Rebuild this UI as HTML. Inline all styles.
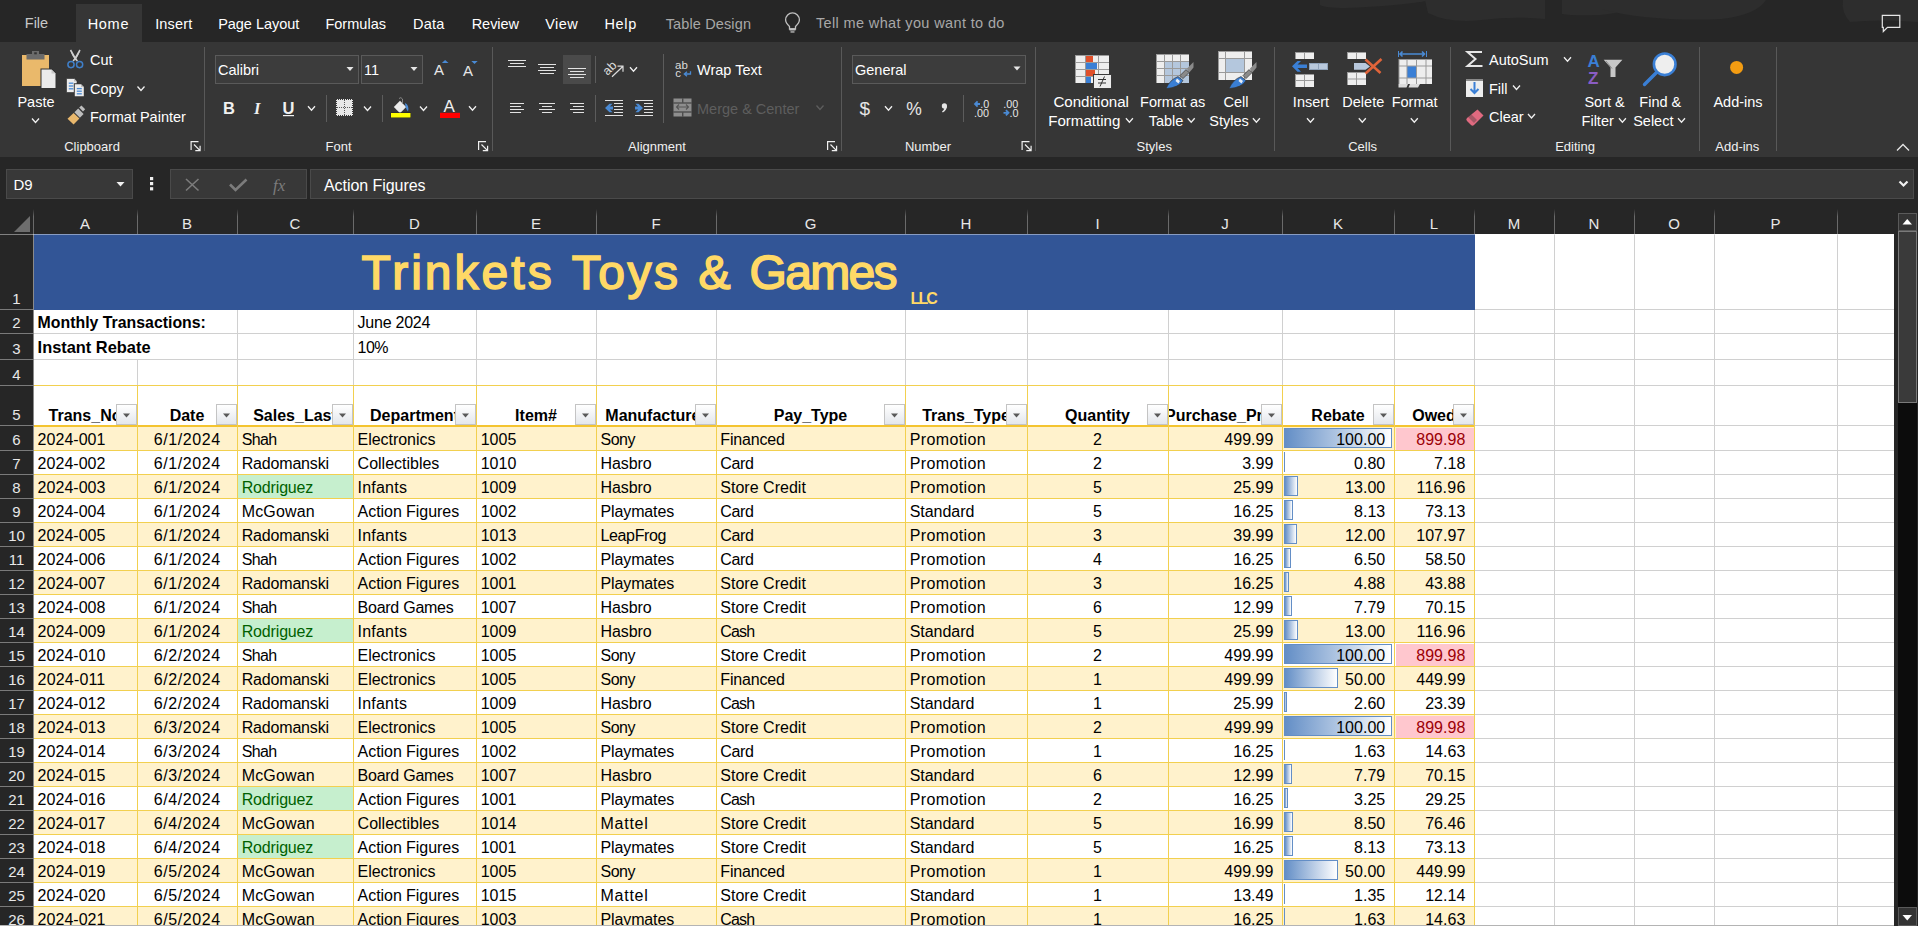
<!DOCTYPE html><html><head><meta charset="utf-8"><title>Excel</title><style>html,body{margin:0;padding:0;}body{width:1918px;height:926px;overflow:hidden;position:relative;background:#262626;font-family:'Liberation Sans', sans-serif;}</style></head><body><div style="position:absolute;left:0px;top:0px;width:1918px;height:42px;background:#262626;"></div><svg style="position:absolute;left:0;top:0" width="1918" height="42"><g fill="#2d2d2d"><path d="M1320 0 H1432 Q1400 6 1345 8 Q1325 8 1320 5 Z"/><path d="M1425 0 H1545 V19 Q1512 16 1482 20 Q1450 24 1428 13 Z"/><path d="M1562 0 H1640 Q1628 13 1600 15 Q1572 16 1562 14 Z"/><path d="M1600 0 H1766 Q1756 15 1722 19 Q1650 22 1600 9 Z"/><path d="M1843 0 H1918 V22 Q1880 19 1850 22 Q1841 12 1843 0 Z"/></g></svg><div style="position:absolute;left:76px;top:4px;width:66px;height:38px;background:#363636;"></div><div style="position:absolute;left:24.80px;top:16.00px;font:normal 14.5px/14.5px 'Liberation Sans', sans-serif;color:#c8c8c8;white-space:nowrap;letter-spacing:-0.003px;">File</div><div style="position:absolute;left:87.70px;top:17.00px;font:normal 14.5px/14.5px 'Liberation Sans', sans-serif;color:#ffffff;white-space:nowrap;letter-spacing:0.693px;">Home</div><div style="position:absolute;left:155.20px;top:17.00px;font:normal 14.5px/14.5px 'Liberation Sans', sans-serif;color:#ffffff;white-space:nowrap;letter-spacing:0.156px;">Insert</div><div style="position:absolute;left:218.20px;top:17.00px;font:normal 14.5px/14.5px 'Liberation Sans', sans-serif;color:#ffffff;white-space:nowrap;letter-spacing:-0.038px;">Page Layout</div><div style="position:absolute;left:325.40px;top:17.00px;font:normal 14.5px/14.5px 'Liberation Sans', sans-serif;color:#ffffff;white-space:nowrap;letter-spacing:0.022px;">Formulas</div><div style="position:absolute;left:413.00px;top:17.00px;font:normal 14.5px/14.5px 'Liberation Sans', sans-serif;color:#ffffff;white-space:nowrap;letter-spacing:0.268px;">Data</div><div style="position:absolute;left:471.70px;top:17.00px;font:normal 14.5px/14.5px 'Liberation Sans', sans-serif;color:#ffffff;white-space:nowrap;letter-spacing:-0.040px;">Review</div><div style="position:absolute;left:545.20px;top:17.00px;font:normal 14.5px/14.5px 'Liberation Sans', sans-serif;color:#ffffff;white-space:nowrap;letter-spacing:0.484px;">View</div><div style="position:absolute;left:604.40px;top:17.00px;font:normal 14.5px/14.5px 'Liberation Sans', sans-serif;color:#ffffff;white-space:nowrap;letter-spacing:0.670px;">Help</div><div style="position:absolute;left:665.70px;top:17.00px;font:normal 14.5px/14.5px 'Liberation Sans', sans-serif;color:#a8a8a8;white-space:nowrap;letter-spacing:0.131px;">Table Design</div><div style="position:absolute;left:815.90px;top:16.00px;font:normal 14.5px/14.5px 'Liberation Sans', sans-serif;color:#a8a8a8;white-space:nowrap;letter-spacing:0.370px;">Tell me what you want to do</div><div style="position:absolute;left:0px;top:42px;width:1918px;height:115px;background:#363636;"></div><div style="position:absolute;left:204px;top:47px;width:1px;height:104px;background:#595959;"></div><div style="position:absolute;left:492px;top:47px;width:1px;height:104px;background:#595959;"></div><div style="position:absolute;left:841px;top:47px;width:1px;height:104px;background:#595959;"></div><div style="position:absolute;left:1035px;top:47px;width:1px;height:104px;background:#595959;"></div><div style="position:absolute;left:1274px;top:47px;width:1px;height:104px;background:#595959;"></div><div style="position:absolute;left:1450px;top:47px;width:1px;height:104px;background:#595959;"></div><div style="position:absolute;left:1699px;top:47px;width:1px;height:104px;background:#595959;"></div><div style="position:absolute;left:1776px;top:47px;width:1px;height:104px;background:#595959;"></div><div style="position:absolute;left:92.05px;top:140.00px;font:normal 13px/13px 'Liberation Sans', sans-serif;color:#f0f0f0;white-space:nowrap;transform:translateX(-50%);">Clipboard</div><div style="position:absolute;left:338.50px;top:140.00px;font:normal 13px/13px 'Liberation Sans', sans-serif;color:#f0f0f0;white-space:nowrap;transform:translateX(-50%);">Font</div><div style="position:absolute;left:657.00px;top:140.00px;font:normal 13px/13px 'Liberation Sans', sans-serif;color:#f0f0f0;white-space:nowrap;transform:translateX(-50%);">Alignment</div><div style="position:absolute;left:928.05px;top:140.00px;font:normal 13px/13px 'Liberation Sans', sans-serif;color:#f0f0f0;white-space:nowrap;transform:translateX(-50%);">Number</div><div style="position:absolute;left:1154.25px;top:140.00px;font:normal 13px/13px 'Liberation Sans', sans-serif;color:#f0f0f0;white-space:nowrap;transform:translateX(-50%);">Styles</div><div style="position:absolute;left:1362.65px;top:140.00px;font:normal 13px/13px 'Liberation Sans', sans-serif;color:#f0f0f0;white-space:nowrap;transform:translateX(-50%);">Cells</div><div style="position:absolute;left:1575.05px;top:140.00px;font:normal 13px/13px 'Liberation Sans', sans-serif;color:#f0f0f0;white-space:nowrap;transform:translateX(-50%);">Editing</div><div style="position:absolute;left:1737.30px;top:140.00px;font:normal 13px/13px 'Liberation Sans', sans-serif;color:#f0f0f0;white-space:nowrap;transform:translateX(-50%);">Add-ins</div><div style="position:absolute;left:215px;top:55px;width:142px;height:27px;background:#3c3c3c;border:1px solid #5a5a5a;"></div><div style="position:absolute;left:361px;top:55px;width:60px;height:27px;background:#3c3c3c;border:1px solid #5a5a5a;"></div><div style="position:absolute;left:852px;top:55px;width:172px;height:27px;background:#3c3c3c;border:1px solid #5a5a5a;"></div><div style="position:absolute;left:36.00px;top:95.00px;font:normal 14.5px/14.5px 'Liberation Sans', sans-serif;color:#fff;white-space:nowrap;transform:translateX(-50%);">Paste</div><div style="position:absolute;left:90.00px;top:53.00px;font:normal 14.5px/14.5px 'Liberation Sans', sans-serif;color:#fff;white-space:nowrap;">Cut</div><div style="position:absolute;left:90.00px;top:82.00px;font:normal 14.5px/14.5px 'Liberation Sans', sans-serif;color:#fff;white-space:nowrap;">Copy</div><div style="position:absolute;left:90.00px;top:110.00px;font:normal 14.5px/14.5px 'Liberation Sans', sans-serif;color:#fff;white-space:nowrap;">Format Painter</div><div style="position:absolute;left:218.00px;top:63.00px;font:normal 14.5px/14.5px 'Liberation Sans', sans-serif;color:#fff;white-space:nowrap;">Calibri</div><div style="position:absolute;left:364.00px;top:63.00px;font:normal 14.5px/14.5px 'Liberation Sans', sans-serif;color:#fff;white-space:nowrap;">11</div><div style="position:absolute;left:697.00px;top:63.00px;font:normal 14.5px/14.5px 'Liberation Sans', sans-serif;color:#fff;white-space:nowrap;">Wrap Text</div><div style="position:absolute;left:697.00px;top:102.00px;font:normal 14.5px/14.5px 'Liberation Sans', sans-serif;color:#5e5e5e;white-space:nowrap;">Merge &amp; Center</div><div style="position:absolute;left:855.00px;top:63.00px;font:normal 14.5px/14.5px 'Liberation Sans', sans-serif;color:#fff;white-space:nowrap;">General</div><div style="position:absolute;left:1091.20px;top:94.00px;font:normal 15.1px/15.1px 'Liberation Sans', sans-serif;color:#fff;white-space:nowrap;transform:translateX(-50%);">Conditional</div><div style="position:absolute;left:1084.30px;top:113.00px;font:normal 15.1px/15.1px 'Liberation Sans', sans-serif;color:#fff;white-space:nowrap;transform:translateX(-50%);">Formatting</div><div style="position:absolute;left:1172.70px;top:95.00px;font:normal 14.5px/14.5px 'Liberation Sans', sans-serif;color:#fff;white-space:nowrap;transform:translateX(-50%);">Format as</div><div style="position:absolute;left:1166.00px;top:114.00px;font:normal 14.5px/14.5px 'Liberation Sans', sans-serif;color:#fff;white-space:nowrap;transform:translateX(-50%);">Table</div><div style="position:absolute;left:1236.00px;top:95.00px;font:normal 14.5px/14.5px 'Liberation Sans', sans-serif;color:#fff;white-space:nowrap;transform:translateX(-50%);">Cell</div><div style="position:absolute;left:1229.00px;top:114.00px;font:normal 14.5px/14.5px 'Liberation Sans', sans-serif;color:#fff;white-space:nowrap;transform:translateX(-50%);">Styles</div><div style="position:absolute;left:1311.00px;top:95.00px;font:normal 14.5px/14.5px 'Liberation Sans', sans-serif;color:#fff;white-space:nowrap;transform:translateX(-50%);">Insert</div><div style="position:absolute;left:1363.30px;top:95.00px;font:normal 14.5px/14.5px 'Liberation Sans', sans-serif;color:#fff;white-space:nowrap;transform:translateX(-50%);">Delete</div><div style="position:absolute;left:1414.60px;top:95.00px;font:normal 14.5px/14.5px 'Liberation Sans', sans-serif;color:#fff;white-space:nowrap;transform:translateX(-50%);">Format</div><div style="position:absolute;left:1489.00px;top:53.00px;font:normal 14.5px/14.5px 'Liberation Sans', sans-serif;color:#fff;white-space:nowrap;">AutoSum</div><div style="position:absolute;left:1489.00px;top:82.00px;font:normal 14.5px/14.5px 'Liberation Sans', sans-serif;color:#fff;white-space:nowrap;">Fill</div><div style="position:absolute;left:1489.00px;top:110.00px;font:normal 14.5px/14.5px 'Liberation Sans', sans-serif;color:#fff;white-space:nowrap;">Clear</div><div style="position:absolute;left:1604.60px;top:95.00px;font:normal 14.5px/14.5px 'Liberation Sans', sans-serif;color:#fff;white-space:nowrap;transform:translateX(-50%);">Sort &amp;</div><div style="position:absolute;left:1597.70px;top:114.00px;font:normal 14.5px/14.5px 'Liberation Sans', sans-serif;color:#fff;white-space:nowrap;transform:translateX(-50%);">Filter</div><div style="position:absolute;left:1660.30px;top:95.00px;font:normal 14.5px/14.5px 'Liberation Sans', sans-serif;color:#fff;white-space:nowrap;transform:translateX(-50%);">Find &amp;</div><div style="position:absolute;left:1653.30px;top:114.00px;font:normal 14.5px/14.5px 'Liberation Sans', sans-serif;color:#fff;white-space:nowrap;transform:translateX(-50%);">Select</div><div style="position:absolute;left:1738.00px;top:95.00px;font:normal 14.5px/14.5px 'Liberation Sans', sans-serif;color:#fff;white-space:nowrap;transform:translateX(-50%);">Add-ins</div><svg style="position:absolute;left:0;top:0" width="1918" height="160"><rect x="22" y="55" width="27" height="31" fill="#eab96b"/><rect x="26.5" y="54" width="18" height="5.5" fill="#6b6b6b"/><rect x="32" y="51" width="7" height="4" fill="#6b6b6b"/><rect x="34.2" y="52.3" width="2.6" height="2" fill="#333"/><path d="M40.5 68.5 H52 L56.5 73 V89 H40.5 Z" fill="#333"/><path d="M41.5 69.5 H51.5 L55.5 73.5 V88 H41.5 Z" fill="#ebebeb"/><path d="M51.5 69.5 V73.5 H55.5" fill="#c8c8c8"/><polyline points="32.0,118.5 35.5,122.5 39.0,118.5" fill="none" stroke="#f0f0f0" stroke-width="1.3"/><path d="M70.5 50.5 Q71.5 56 76.8 61.5 L78 60.5 Q73.5 55.5 70.5 50.5 Z" fill="#d0d0d0"/><path d="M80 50.5 Q79 56 73.7 61.5 L72.5 60.5 Q77 55.5 80 50.5 Z" fill="#d0d0d0"/><path d="M70.5 50 L76.2 59.8 M80 50 L74.3 59.8" stroke="#d0d0d0" stroke-width="1.6" fill="none"/><circle cx="71" cy="64.6" r="3.1" fill="none" stroke="#3f7fc9" stroke-width="1.5"/><circle cx="79.6" cy="64.6" r="3.1" fill="none" stroke="#3f7fc9" stroke-width="1.5"/><path d="M66.5 78.5 H74 L77 81.5 V92.5 H66.5 Z" fill="#ececec" stroke="#2a2a2a" stroke-width="0.6"/><path d="M74 78.5 V81.5 H77" fill="#bdbdbd"/><rect x="68.8" y="82.55" width="4.5" height="1.3" fill="#4a8ad4"/><rect x="68.8" y="85.35" width="4.5" height="1.3" fill="#4a8ad4"/><rect x="68.8" y="88.14999999999999" width="4.5" height="1.3" fill="#4a8ad4"/><path d="M73.8 83.2 H81.5 L84.5 86.2 V97 H73.8 Z" fill="#363636"/><path d="M74.8 84.2 H81 L83.8 87 V96.2 H74.8 Z" fill="#ececec"/><path d="M81 84.2 V87 H83.8" fill="#bdbdbd"/><rect x="76.8" y="87.94999999999999" width="5" height="1.3" fill="#4a8ad4"/><rect x="76.8" y="90.55" width="5" height="1.3" fill="#4a8ad4"/><rect x="76.8" y="93.14999999999999" width="5" height="1.3" fill="#4a8ad4"/><polyline points="137.5,86.5 141,90.5 144.5,86.5" fill="none" stroke="#f0f0f0" stroke-width="1.3"/><path d="M67.5 118.8 L73.6 113 L79.4 118.6 L73.6 124.5 Z" fill="#e9b86d"/><path d="M74.4 112.3 L78.2 108.6 L83.6 114 L79.9 117.8 Z" fill="#bdbdbd"/><path d="M79.2 107.6 L81.4 105.4 L85.2 109.2 L83 111.4 Z" fill="#bdbdbd"/><polyline points="198.5,141.6 191.1,141.6 191.1,150" stroke="#f0f0f0" stroke-width="1.2" fill="none"/><path d="M194.0 144.5 L200.1 150.6 M200.1 145.8 V150.6 H195.3" stroke="#f0f0f0" stroke-width="1.2" fill="none"/><polyline points="486,141.6 478.6,141.6 478.6,150" stroke="#f0f0f0" stroke-width="1.2" fill="none"/><path d="M481.5 144.5 L487.6 150.6 M487.6 145.8 V150.6 H482.8" stroke="#f0f0f0" stroke-width="1.2" fill="none"/><polyline points="835,141.6 827.6,141.6 827.6,150" stroke="#f0f0f0" stroke-width="1.2" fill="none"/><path d="M830.5 144.5 L836.6 150.6 M836.6 145.8 V150.6 H831.8" stroke="#f0f0f0" stroke-width="1.2" fill="none"/><polyline points="1029.5,141.6 1022.1,141.6 1022.1,150" stroke="#f0f0f0" stroke-width="1.2" fill="none"/><path d="M1025.0 144.5 L1031.1 150.6 M1031.1 145.8 V150.6 H1026.3" stroke="#f0f0f0" stroke-width="1.2" fill="none"/><polygon points="346.5,67.0 353.5,67.0 350,71.0" fill="#e6e6e6"/><polygon points="410.5,67.0 417.5,67.0 414,71.0" fill="#e6e6e6"/><text x="434" y="75.2" font-family="Liberation Sans" font-size="15" fill="#e6e6e6">A</text><polygon points="441.8,63 448.5,63 445.15,60" fill="#4a8ad4"/><text x="463" y="76" font-family="Liberation Sans" font-size="15" fill="#e6e6e6">A</text><polygon points="471.3,61 477.7,61 474.5,64" fill="#4a8ad4"/><text x="223" y="114.1" font-family="Liberation Sans" font-weight="bold" font-size="16.5" fill="#f0f0f0">B</text><text x="254" y="114.1" font-family="Liberation Serif" font-weight="bold" font-style="italic" font-size="16.5" fill="#f0f0f0">I</text><text x="282.6" y="114" font-family="Liberation Sans" font-weight="bold" font-size="16.5" fill="#f0f0f0">U</text><rect x="283" y="115" width="11" height="1.2" fill="#f0f0f0"/><polyline points="308.0,106.3 311.5,110.3 315.0,106.3" fill="none" stroke="#f0f0f0" stroke-width="1.3"/><rect x="326" y="95" width="1" height="27" fill="#5c5c5c"/><rect x="336" y="99" width="17" height="17" fill="#e8e8e8"/><rect x="336" y="99" width="1" height="1" fill="#363636"/><rect x="336" y="115" width="1" height="1" fill="#363636"/><rect x="336" y="99" width="1" height="1" fill="#363636"/><rect x="352" y="99" width="1" height="1" fill="#363636"/><rect x="338" y="99" width="1" height="1" fill="#363636"/><rect x="338" y="115" width="1" height="1" fill="#363636"/><rect x="336" y="101" width="1" height="1" fill="#363636"/><rect x="352" y="101" width="1" height="1" fill="#363636"/><rect x="340" y="99" width="1" height="1" fill="#363636"/><rect x="340" y="115" width="1" height="1" fill="#363636"/><rect x="336" y="103" width="1" height="1" fill="#363636"/><rect x="352" y="103" width="1" height="1" fill="#363636"/><rect x="342" y="99" width="1" height="1" fill="#363636"/><rect x="342" y="115" width="1" height="1" fill="#363636"/><rect x="336" y="105" width="1" height="1" fill="#363636"/><rect x="352" y="105" width="1" height="1" fill="#363636"/><rect x="344" y="99" width="1" height="1" fill="#363636"/><rect x="344" y="115" width="1" height="1" fill="#363636"/><rect x="336" y="107" width="1" height="1" fill="#363636"/><rect x="352" y="107" width="1" height="1" fill="#363636"/><rect x="346" y="99" width="1" height="1" fill="#363636"/><rect x="346" y="115" width="1" height="1" fill="#363636"/><rect x="336" y="109" width="1" height="1" fill="#363636"/><rect x="352" y="109" width="1" height="1" fill="#363636"/><rect x="348" y="99" width="1" height="1" fill="#363636"/><rect x="348" y="115" width="1" height="1" fill="#363636"/><rect x="336" y="111" width="1" height="1" fill="#363636"/><rect x="352" y="111" width="1" height="1" fill="#363636"/><rect x="350" y="99" width="1" height="1" fill="#363636"/><rect x="350" y="115" width="1" height="1" fill="#363636"/><rect x="336" y="113" width="1" height="1" fill="#363636"/><rect x="352" y="113" width="1" height="1" fill="#363636"/><rect x="352" y="99" width="1" height="1" fill="#363636"/><rect x="352" y="115" width="1" height="1" fill="#363636"/><rect x="336" y="115" width="1" height="1" fill="#363636"/><rect x="352" y="115" width="1" height="1" fill="#363636"/><rect x="337" y="107" width="1" height="1" fill="#5a5a5a"/><rect x="344" y="100" width="1" height="1" fill="#5a5a5a"/><rect x="339" y="107" width="1" height="1" fill="#5a5a5a"/><rect x="344" y="102" width="1" height="1" fill="#5a5a5a"/><rect x="341" y="107" width="1" height="1" fill="#5a5a5a"/><rect x="344" y="104" width="1" height="1" fill="#5a5a5a"/><rect x="343" y="107" width="1" height="1" fill="#5a5a5a"/><rect x="344" y="106" width="1" height="1" fill="#5a5a5a"/><rect x="345" y="107" width="1" height="1" fill="#5a5a5a"/><rect x="344" y="108" width="1" height="1" fill="#5a5a5a"/><rect x="347" y="107" width="1" height="1" fill="#5a5a5a"/><rect x="344" y="110" width="1" height="1" fill="#5a5a5a"/><rect x="349" y="107" width="1" height="1" fill="#5a5a5a"/><rect x="344" y="112" width="1" height="1" fill="#5a5a5a"/><rect x="351" y="107" width="1" height="1" fill="#5a5a5a"/><rect x="344" y="114" width="1" height="1" fill="#5a5a5a"/><polyline points="364.0,106.5 367.5,110.5 371.0,106.5" fill="none" stroke="#f0f0f0" stroke-width="1.3"/><rect x="382" y="95" width="1" height="27" fill="#5c5c5c"/><path d="M393.8 107 L400 100.8 L406.2 107 L400 113.2 Z" fill="#ebebeb"/><path d="M399 98.5 Q401 96.5 402.5 99 V104" stroke="#9a9a9a" stroke-width="0.8" fill="none"/><path d="M405 103 Q409.5 105 408 111.5 Q405.5 109 405 103 Z" fill="#4a8ad4"/><rect x="390.5" y="112.5" width="20.5" height="5.5" fill="#222"/><rect x="391" y="113" width="19.5" height="4.5" fill="#ffff00"/><polyline points="420.0,106.5 423.5,110.5 427.0,106.5" fill="none" stroke="#f0f0f0" stroke-width="1.3"/><text x="443.5" y="112" font-family="Liberation Sans" font-size="17" fill="#f0f0f0">A</text><rect x="440" y="112.8" width="20" height="5.2" fill="#ff0000"/><polyline points="469.0,106.3 472.5,110.3 476.0,106.3" fill="none" stroke="#f0f0f0" stroke-width="1.3"/><rect x="563" y="55" width="28" height="29" fill="#4a4a4a"/><rect x="508" y="60" width="18" height="1" fill="#e2e2e2"/><rect x="510" y="63" width="14" height="1" fill="#e2e2e2"/><rect x="508" y="66" width="18" height="1" fill="#e2e2e2"/><rect x="538" y="64" width="18" height="1" fill="#e2e2e2"/><rect x="540" y="67" width="14" height="1" fill="#e2e2e2"/><rect x="538" y="70" width="18" height="1" fill="#e2e2e2"/><rect x="540" y="73" width="14" height="1" fill="#e2e2e2"/><rect x="568" y="68" width="18" height="1" fill="#e2e2e2"/><rect x="570" y="71" width="14" height="1" fill="#e2e2e2"/><rect x="568" y="74" width="18" height="1" fill="#e2e2e2"/><rect x="570" y="77" width="14" height="1" fill="#e2e2e2"/><rect x="510" y="103" width="14" height="1" fill="#e2e2e2"/><rect x="510" y="106" width="11" height="1" fill="#e2e2e2"/><rect x="510" y="109" width="14" height="1" fill="#e2e2e2"/><rect x="510" y="112" width="11" height="1" fill="#e2e2e2"/><rect x="539" y="103" width="16" height="1" fill="#e2e2e2"/><rect x="542" y="106" width="10" height="1" fill="#e2e2e2"/><rect x="539" y="109" width="16" height="1" fill="#e2e2e2"/><rect x="542" y="112" width="10" height="1" fill="#e2e2e2"/><rect x="570" y="103" width="14" height="1" fill="#e2e2e2"/><rect x="573" y="106" width="11" height="1" fill="#e2e2e2"/><rect x="570" y="109" width="14" height="1" fill="#e2e2e2"/><rect x="573" y="112" width="11" height="1" fill="#e2e2e2"/><rect x="595" y="56" width="1" height="27" fill="#5c5c5c"/><rect x="595" y="95" width="1" height="27" fill="#5c5c5c"/><text x="0" y="0" font-family="Liberation Sans" font-size="12.5" fill="#dcdcdc" transform="translate(607.5 76) rotate(-45)">ab</text><path d="M612 76.7 L623 66.2 M617.5 66.2 H623 V71.7" stroke="#dcdcdc" stroke-width="1.2" fill="none"/><polyline points="630.0,67.3 633.5,71.3 637.0,67.3" fill="none" stroke="#f0f0f0" stroke-width="1.3"/><rect x="605" y="100" width="18" height="1" fill="#e2e2e2"/><rect x="635" y="100" width="18" height="1" fill="#e2e2e2"/><rect x="605" y="115" width="18" height="1" fill="#e2e2e2"/><rect x="635" y="115" width="18" height="1" fill="#e2e2e2"/><rect x="614" y="103" width="9" height="1" fill="#e2e2e2"/><rect x="644" y="103" width="9" height="1" fill="#e2e2e2"/><rect x="614" y="106" width="9" height="1" fill="#e2e2e2"/><rect x="644" y="106" width="9" height="1" fill="#e2e2e2"/><rect x="614" y="109" width="9" height="1" fill="#e2e2e2"/><rect x="644" y="109" width="9" height="1" fill="#e2e2e2"/><rect x="614" y="112" width="9" height="1" fill="#e2e2e2"/><rect x="644" y="112" width="9" height="1" fill="#e2e2e2"/><path d="M605 108 L609.5 103.7 H612.6 L609.8 106.6 H613 V109.4 H609.8 L612.6 112.2 H609.5 Z" fill="#4a8ad4"/><path d="M643 108 L638.5 103.7 H635.4 L638.2 106.6 H635 V109.4 H638.2 L635.4 112.2 H638.5 Z" fill="#4a8ad4"/><text x="675" y="68.8" font-family="Liberation Sans" font-size="11.5" fill="#dcdcdc">ab</text><text x="675.3" y="76.8" font-family="Liberation Sans" font-size="11.5" fill="#dcdcdc">c</text><path d="M690.5 71.2 V74 H684.5 M687 71.8 L684.3 74 L687 76.2" stroke="#4a8ad4" stroke-width="1.3" fill="none"/><rect x="673.5" y="98.5" width="18" height="18" fill="#8e8e8e"/><rect x="673.5" y="102.5" width="18" height="1" fill="#333"/><rect x="673.5" y="111.5" width="18" height="1" fill="#333"/><rect x="682.3" y="98.5" width="1" height="4" fill="#333"/><rect x="682.3" y="112.5" width="1" height="4" fill="#333"/><path d="M676.5 107 H688.5 M679 104.5 L676.5 107 L679 109.5 M686 104.5 L688.5 107 L686 109.5" stroke="#555" stroke-width="1.1" fill="none"/><polyline points="816.5,105.5 820,109.5 823.5,105.5" fill="none" stroke="#5e5e5e" stroke-width="1.3"/><rect x="663" y="54" width="1" height="69" fill="#5c5c5c"/><polygon points="1013.5,66.5 1020.5,66.5 1017,70.5" fill="#e6e6e6"/><text x="859.6" y="114.6" font-family="Liberation Sans" font-size="19" fill="#e6e6e6">$</text><polyline points="885.0,106.3 888.5,110.3 892.0,106.3" fill="none" stroke="#f0f0f0" stroke-width="1.3"/><text x="906.3" y="115" font-family="Liberation Sans" font-size="17.5" fill="#e6e6e6">%</text><circle cx="944.4" cy="105.9" r="2.6" fill="#e6e6e6"/><path d="M946.9 106 Q946.9 110.2 942.8 112.6 L942 111.6 Q944.3 109.8 944.5 107.6 Z" fill="#e6e6e6"/><rect x="963" y="95" width="1" height="27" fill="#5c5c5c"/><text x="980.3" y="107.6" font-family="Liberation Sans" font-size="10.8" fill="#e6e6e6">.0</text><text x="974" y="116.5" font-family="Liberation Sans" font-size="10.8" fill="#e6e6e6">.00</text><path d="M980 104 H975 M977.6 101.4 L975 104 L977.6 106.6" stroke="#4a8ad4" stroke-width="1.8" fill="none"/><text x="1003.3" y="107.6" font-family="Liberation Sans" font-size="10.8" fill="#e6e6e6">.00</text><text x="1009.5" y="116.5" font-family="Liberation Sans" font-size="10.8" fill="#e6e6e6">.0</text><path d="M1003.5 112.8 H1008.5 M1005.9 110.2 L1008.5 112.8 L1005.9 115.4" stroke="#4a8ad4" stroke-width="1.8" fill="none"/><rect x="1075" y="55" width="34" height="28" fill="#9a9a9a"/><rect x="1076" y="56" width="9" height="6" fill="#eeeeee"/><rect x="1076" y="63" width="9" height="6" fill="#eeeeee"/><rect x="1076" y="70" width="9" height="6" fill="#eeeeee"/><rect x="1076" y="77" width="9" height="6" fill="#eeeeee"/><rect x="1086" y="56" width="12" height="6" fill="#eeeeee"/><rect x="1086" y="63" width="12" height="6" fill="#eeeeee"/><rect x="1086" y="70" width="12" height="6" fill="#eeeeee"/><rect x="1086" y="77" width="12" height="6" fill="#eeeeee"/><rect x="1099" y="56" width="10" height="6" fill="#eeeeee"/><rect x="1099" y="63" width="10" height="6" fill="#eeeeee"/><rect x="1099" y="70" width="10" height="6" fill="#eeeeee"/><rect x="1099" y="77" width="10" height="6" fill="#eeeeee"/><rect x="1086" y="56" width="7" height="6" fill="#e0502b"/><rect x="1086" y="63" width="11" height="6" fill="#3a7fd5"/><rect x="1086" y="70" width="9" height="6" fill="#e0502b"/><rect x="1086" y="77" width="5" height="6" fill="#3a7fd5"/><rect x="1093" y="74" width="19" height="15" fill="#3a3a3a"/><rect x="1094" y="75" width="17" height="13" fill="#ececec"/><path d="M1098 79.5 H1106 M1098 83 H1106 M1100 86.5 L1104.5 76.5" stroke="#333" stroke-width="1" fill="none"/><rect x="1156" y="54" width="33" height="29" fill="#9a9a9a"/><rect x="1157" y="55" width="7" height="6" fill="#eeeeee"/><rect x="1157" y="62" width="7" height="6" fill="#eeeeee"/><rect x="1157" y="69" width="7" height="6" fill="#eeeeee"/><rect x="1157" y="76" width="7" height="7" fill="#eeeeee"/><rect x="1165" y="55" width="7" height="6" fill="#eeeeee"/><rect x="1165" y="62" width="7" height="6" fill="#b4c7dd"/><rect x="1165" y="69" width="7" height="6" fill="#b4c7dd"/><rect x="1165" y="76" width="7" height="7" fill="#b4c7dd"/><rect x="1173" y="55" width="7" height="6" fill="#eeeeee"/><rect x="1173" y="62" width="7" height="6" fill="#b4c7dd"/><rect x="1173" y="69" width="7" height="6" fill="#b4c7dd"/><rect x="1173" y="76" width="7" height="7" fill="#b4c7dd"/><rect x="1181" y="55" width="8" height="6" fill="#eeeeee"/><rect x="1181" y="62" width="8" height="6" fill="#b4c7dd"/><rect x="1181" y="69" width="8" height="6" fill="#b4c7dd"/><rect x="1181" y="76" width="8" height="7" fill="#b4c7dd"/><path d="M1187 68.6 L1193.5 62.099999999999994 L1193.5 67.6 L1188.5 73.6 Z" fill="#8a8a8a"/><path d="M1180 75.6 L1186 69.6 L1189 72.6 L1183 78.6 Z" fill="#8a8a8a" stroke="#333" stroke-width="0.7"/><path d="M1166 88.6 Q1170 79.6 1178 76.6 L1183 80.6 Q1179 87.6 1166 88.6 Z" fill="#3a7fd5" stroke="#333" stroke-width="0.7"/><path d="M1177 78.6 L1180 81.1 L1178.5 83.6 L1175.5 81.1 Z" fill="#e8eef6"/><rect x="1218" y="51" width="34" height="29" fill="#9a9a9a"/><rect x="1219" y="52" width="6" height="6" fill="#eeeeee"/><rect x="1219" y="59" width="6" height="13" fill="#eeeeee"/><rect x="1219" y="73" width="6" height="7" fill="#eeeeee"/><rect x="1226" y="52" width="18" height="6" fill="#eeeeee"/><rect x="1226" y="59" width="18" height="13" fill="#b4c7dd"/><rect x="1226" y="73" width="18" height="7" fill="#eeeeee"/><rect x="1245" y="52" width="7" height="6" fill="#eeeeee"/><rect x="1245" y="59" width="7" height="13" fill="#eeeeee"/><rect x="1245" y="73" width="7" height="7" fill="#eeeeee"/><path d="M1250 68.6 L1256.5 62.099999999999994 L1256.5 67.6 L1251.5 73.6 Z" fill="#8a8a8a"/><path d="M1243 75.6 L1249 69.6 L1252 72.6 L1246 78.6 Z" fill="#8a8a8a" stroke="#333" stroke-width="0.7"/><path d="M1229 88.6 Q1233 79.6 1241 76.6 L1246 80.6 Q1242 87.6 1229 88.6 Z" fill="#3a7fd5" stroke="#333" stroke-width="0.7"/><path d="M1240 78.6 L1243 81.1 L1241.5 83.6 L1238.5 81.1 Z" fill="#e8eef6"/><rect x="1295" y="52" width="19" height="7" fill="#9a9a9a"/><rect x="1296" y="53" width="8" height="6" fill="#eeeeee"/><rect x="1305" y="53" width="9" height="6" fill="#eeeeee"/><rect x="1295" y="74" width="19" height="13" fill="#9a9a9a"/><rect x="1296" y="75" width="8" height="5" fill="#eeeeee"/><rect x="1296" y="81" width="8" height="6" fill="#eeeeee"/><rect x="1305" y="75" width="9" height="5" fill="#eeeeee"/><rect x="1305" y="81" width="9" height="6" fill="#eeeeee"/><path d="M1292 66.3 L1297.5 61 H1301 L1297.5 64.6 H1307 V68 H1297.5 L1301 71.8 H1297.5 Z" fill="#3a7fd5"/><rect x="1309" y="63" width="19" height="7" fill="#8fa3bb"/><rect x="1310" y="64" width="8" height="5" fill="#b8c8dc"/><rect x="1319" y="64" width="8" height="5" fill="#b8c8dc"/><rect x="1347" y="52" width="19" height="7" fill="#9a9a9a"/><rect x="1348" y="53" width="8" height="6" fill="#eeeeee"/><rect x="1357" y="53" width="9" height="6" fill="#eeeeee"/><rect x="1347" y="72" width="19" height="13" fill="#9a9a9a"/><rect x="1348" y="73" width="8" height="5.5" fill="#eeeeee"/><rect x="1348" y="79.5" width="8" height="5.5" fill="#eeeeee"/><rect x="1357" y="73" width="9" height="5.5" fill="#eeeeee"/><rect x="1357" y="79.5" width="9" height="5.5" fill="#eeeeee"/><path d="M1354 63 H1365.5 L1370 66.4 L1365.5 69.8 H1354 Z" fill="#b8c8dc"/><path d="M1365.5 59.5 L1380.5 73 M1381.5 59 L1365.5 73.5" stroke="#e0643a" stroke-width="2.6" fill="none"/><path d="M1400 54 H1424.5 M1402.5 51.5 L1400 54 L1402.5 56.5 M1422 51.5 L1424.5 54 L1422 56.5" stroke="#4a8ad4" stroke-width="1.6" fill="none"/><rect x="1398" y="51" width="1" height="6" fill="#4a8ad4"/><rect x="1426" y="51" width="1" height="6" fill="#4a8ad4"/><rect x="1398.5" y="59" width="33.5" height="25" fill="#9a9a9a"/><rect x="1399.5" y="60" width="7.0" height="5.5" fill="#eeeeee"/><rect x="1399.5" y="66.5" width="7.0" height="11.0" fill="#eeeeee"/><rect x="1399.5" y="78.5" width="7.0" height="5.5" fill="#eeeeee"/><rect x="1407.5" y="60" width="8.5" height="5.5" fill="#eeeeee"/><rect x="1407.5" y="66.5" width="8.5" height="11.0" fill="#3a7fd5"/><rect x="1407.5" y="78.5" width="8.5" height="5.5" fill="#eeeeee"/><rect x="1417" y="60" width="8.5" height="5.5" fill="#eeeeee"/><rect x="1417" y="66.5" width="8.5" height="11.0" fill="#eeeeee"/><rect x="1417" y="78.5" width="8.5" height="5.5" fill="#eeeeee"/><rect x="1426.5" y="60" width="5.5" height="5.5" fill="#eeeeee"/><rect x="1426.5" y="66.5" width="5.5" height="11.0" fill="#eeeeee"/><rect x="1426.5" y="78.5" width="5.5" height="5.5" fill="#eeeeee"/><path d="M1398.5 84 H1408 L1406.5 87.5 H1398.5 Z M1410 84 H1420 L1418 87.5 H1408.5 Z" fill="#dcdcdc"/><polyline points="1307.0,118.3 1310.5,122.3 1314.0,118.3" fill="none" stroke="#f0f0f0" stroke-width="1.3"/><polyline points="1358.8,118.3 1362.3,122.3 1365.8,118.3" fill="none" stroke="#f0f0f0" stroke-width="1.3"/><polyline points="1410.8,118.3 1414.3,122.3 1417.8,118.3" fill="none" stroke="#f0f0f0" stroke-width="1.3"/><path d="M1482 52 H1467.5 L1475.5 59 L1467.5 66 H1482.5" stroke="#e6e6e6" stroke-width="2" fill="none"/><polyline points="1564.0,57.3 1567.5,61.3 1571.0,57.3" fill="none" stroke="#f0f0f0" stroke-width="1.3"/><rect x="1466" y="79" width="17" height="18" fill="#eeeeee"/><rect x="1466" y="79" width="17" height="2" fill="#8a8a8a"/><path d="M1474.5 82 V93 M1470.5 89 L1474.5 93 L1478.5 89" stroke="#3a7fd5" stroke-width="2" fill="none"/><polyline points="1513.0,85.5 1516.5,89.5 1520.0,85.5" fill="none" stroke="#f0f0f0" stroke-width="1.3"/><path d="M1477.5 109.5 L1483.5 115.5 L1474 125 Q1472.5 126.5 1471 125 L1467 121 Q1465.5 119.5 1467 118 Z" fill="#e06a80"/><path d="M1471 114 L1477 120 L1474 123 L1468 117 Z" fill="#333" opacity="0.35"/><polyline points="1528.0,114.0 1531.5,118.0 1535.0,114.0" fill="none" stroke="#f0f0f0" stroke-width="1.3"/><text x="1587.5" y="66.8" font-family="Liberation Sans" font-weight="bold" font-size="17" fill="#3a7fd5">A</text><text x="1588" y="84" font-family="Liberation Sans" font-weight="bold" font-size="17" fill="#8a5cc4">Z</text><path d="M1603.7 59.7 H1622.4 L1615.5 67.5 V76.9 H1610.5 V67.5 Z" fill="#c8c8c8"/><path d="M1606 61 L1612 68.5" stroke="#8a8a8a" stroke-width="1" fill="none"/><circle cx="1664.7" cy="64.3" r="10.8" fill="#eeeeee" stroke="#3a7fd5" stroke-width="2.6"/><path d="M1656.5 72.5 L1644.5 84.5" stroke="#3a7fd5" stroke-width="3.4" stroke-linecap="round" fill="none"/><polyline points="1618.9,118.3 1622.4,122.3 1625.9,118.3" fill="none" stroke="#f0f0f0" stroke-width="1.3"/><polyline points="1678.0,118.3 1681.5,122.3 1685.0,118.3" fill="none" stroke="#f0f0f0" stroke-width="1.3"/><circle cx="1736.6" cy="67.4" r="6.5" fill="#f39c12"/><polyline points="1897,150.5 1903,144.5 1909,150.5" fill="none" stroke="#e6e6e6" stroke-width="1.3"/><path d="M789.5 29 V26.5 Q785.6 23 785.6 19.8 A6.9 6.9 0 0 1 799.4 19.8 Q799.4 23 795.5 26.5 V29 Z" fill="none" stroke="#c0c0c0" stroke-width="1.3"/><rect x="789.5" y="28.3" width="6" height="2.2" fill="#c0c0c0"/><rect x="790.5" y="31.3" width="4" height="1.3" fill="#c0c0c0"/><path d="M1882.3 15.3 H1899.8 V27.3 H1887.5 L1883.3 31.5 V27.3 H1882.3 Z" fill="none" stroke="#e6e6e6" stroke-width="1.2"/><polyline points="1125.9,118.3 1129.4,122.3 1132.9,118.3" fill="none" stroke="#f0f0f0" stroke-width="1.3"/><polyline points="1187.7,118.3 1191.2,122.3 1194.7,118.3" fill="none" stroke="#f0f0f0" stroke-width="1.3"/><polyline points="1252.9,118.3 1256.4,122.3 1259.9,118.3" fill="none" stroke="#f0f0f0" stroke-width="1.3"/></svg><div style="position:absolute;left:0px;top:157px;width:1918px;height:54px;background:#262626;"></div><div style="position:absolute;left:6px;top:169px;width:125px;height:28px;background:#383838;border:1px solid #4a4a4a;"></div><div style="position:absolute;left:13.40px;top:177.20px;font:normal 15px/15px 'Liberation Sans', sans-serif;color:#fff;white-space:nowrap;">D9</div><div style="position:absolute;left:170px;top:169px;width:135px;height:28px;background:#383838;border:1px solid #4a4a4a;"></div><div style="position:absolute;left:310px;top:169px;width:1602px;height:28px;background:#383838;border:1px solid #4a4a4a;"></div><div style="position:absolute;left:324.00px;top:177.50px;font:normal 16px/16px 'Liberation Sans', sans-serif;color:#fff;white-space:nowrap;letter-spacing:-0.056px;">Action Figures</div><svg style="position:absolute;left:0;top:157px" width="1918" height="54"><polygon points="116.5,25 124.5,25 120.5,29.5" fill="#f0f0f0"/><rect x="150" y="20" width="3.2" height="3.2" fill="#f0f0f0"/><rect x="150" y="25" width="3.2" height="3.2" fill="#f0f0f0"/><rect x="150" y="30.2" width="3.2" height="3.2" fill="#f0f0f0"/><path d="M186 22 L198.5 33.5 M198.5 22 L186 33.5" stroke="#7c7c7c" stroke-width="1.6" fill="none"/><path d="M230 27.5 L235.5 33 L246.5 22.5" stroke="#7c7c7c" stroke-width="2.6" fill="none"/><text x="273" y="33.5" font-family="Liberation Serif" font-style="italic" font-size="17" fill="#7c7c7c">fx</text><polyline points="1899.5,24.5 1903.5,28.5 1907.5,24.5" fill="none" stroke="#f0f0f0" stroke-width="2.2"/></svg><div style="position:absolute;left:0px;top:211px;width:1898px;height:23px;background:#262626;"></div><div style="position:absolute;left:0px;top:234px;width:1894px;height:692px;background:#ffffff;"></div><div style="position:absolute;left:0px;top:234px;width:33px;height:692px;background:#262626;"></div><div style="position:absolute;left:85.00px;top:216.00px;font:normal 15px/15px 'Liberation Sans', sans-serif;color:#e8e8e8;white-space:nowrap;transform:translateX(-50%);">A</div><div style="position:absolute;left:187.00px;top:216.00px;font:normal 15px/15px 'Liberation Sans', sans-serif;color:#e8e8e8;white-space:nowrap;transform:translateX(-50%);">B</div><div style="position:absolute;left:295.00px;top:216.00px;font:normal 15px/15px 'Liberation Sans', sans-serif;color:#e8e8e8;white-space:nowrap;transform:translateX(-50%);">C</div><div style="position:absolute;left:414.50px;top:216.00px;font:normal 15px/15px 'Liberation Sans', sans-serif;color:#e8e8e8;white-space:nowrap;transform:translateX(-50%);">D</div><div style="position:absolute;left:536.00px;top:216.00px;font:normal 15px/15px 'Liberation Sans', sans-serif;color:#e8e8e8;white-space:nowrap;transform:translateX(-50%);">E</div><div style="position:absolute;left:656.00px;top:216.00px;font:normal 15px/15px 'Liberation Sans', sans-serif;color:#e8e8e8;white-space:nowrap;transform:translateX(-50%);">F</div><div style="position:absolute;left:810.50px;top:216.00px;font:normal 15px/15px 'Liberation Sans', sans-serif;color:#e8e8e8;white-space:nowrap;transform:translateX(-50%);">G</div><div style="position:absolute;left:966.00px;top:216.00px;font:normal 15px/15px 'Liberation Sans', sans-serif;color:#e8e8e8;white-space:nowrap;transform:translateX(-50%);">H</div><div style="position:absolute;left:1097.50px;top:216.00px;font:normal 15px/15px 'Liberation Sans', sans-serif;color:#e8e8e8;white-space:nowrap;transform:translateX(-50%);">I</div><div style="position:absolute;left:1225.00px;top:216.00px;font:normal 15px/15px 'Liberation Sans', sans-serif;color:#e8e8e8;white-space:nowrap;transform:translateX(-50%);">J</div><div style="position:absolute;left:1338.00px;top:216.00px;font:normal 15px/15px 'Liberation Sans', sans-serif;color:#e8e8e8;white-space:nowrap;transform:translateX(-50%);">K</div><div style="position:absolute;left:1434.00px;top:216.00px;font:normal 15px/15px 'Liberation Sans', sans-serif;color:#e8e8e8;white-space:nowrap;transform:translateX(-50%);">L</div><div style="position:absolute;left:1514.00px;top:216.00px;font:normal 15px/15px 'Liberation Sans', sans-serif;color:#e8e8e8;white-space:nowrap;transform:translateX(-50%);">M</div><div style="position:absolute;left:1594.00px;top:216.00px;font:normal 15px/15px 'Liberation Sans', sans-serif;color:#e8e8e8;white-space:nowrap;transform:translateX(-50%);">N</div><div style="position:absolute;left:1674.00px;top:216.00px;font:normal 15px/15px 'Liberation Sans', sans-serif;color:#e8e8e8;white-space:nowrap;transform:translateX(-50%);">O</div><div style="position:absolute;left:1775.50px;top:216.00px;font:normal 15px/15px 'Liberation Sans', sans-serif;color:#e8e8e8;white-space:nowrap;transform:translateX(-50%);">P</div><div style="position:absolute;left:33px;top:209px;width:1px;height:25px;background:linear-gradient(rgba(110,110,110,0),#6a6a6a 30%)"></div><div style="position:absolute;left:137px;top:209px;width:1px;height:25px;background:linear-gradient(rgba(110,110,110,0),#6a6a6a 30%)"></div><div style="position:absolute;left:237px;top:209px;width:1px;height:25px;background:linear-gradient(rgba(110,110,110,0),#6a6a6a 30%)"></div><div style="position:absolute;left:353px;top:209px;width:1px;height:25px;background:linear-gradient(rgba(110,110,110,0),#6a6a6a 30%)"></div><div style="position:absolute;left:476px;top:209px;width:1px;height:25px;background:linear-gradient(rgba(110,110,110,0),#6a6a6a 30%)"></div><div style="position:absolute;left:596px;top:209px;width:1px;height:25px;background:linear-gradient(rgba(110,110,110,0),#6a6a6a 30%)"></div><div style="position:absolute;left:716px;top:209px;width:1px;height:25px;background:linear-gradient(rgba(110,110,110,0),#6a6a6a 30%)"></div><div style="position:absolute;left:905px;top:209px;width:1px;height:25px;background:linear-gradient(rgba(110,110,110,0),#6a6a6a 30%)"></div><div style="position:absolute;left:1027px;top:209px;width:1px;height:25px;background:linear-gradient(rgba(110,110,110,0),#6a6a6a 30%)"></div><div style="position:absolute;left:1168px;top:209px;width:1px;height:25px;background:linear-gradient(rgba(110,110,110,0),#6a6a6a 30%)"></div><div style="position:absolute;left:1282px;top:209px;width:1px;height:25px;background:linear-gradient(rgba(110,110,110,0),#6a6a6a 30%)"></div><div style="position:absolute;left:1394px;top:209px;width:1px;height:25px;background:linear-gradient(rgba(110,110,110,0),#6a6a6a 30%)"></div><div style="position:absolute;left:1474px;top:209px;width:1px;height:25px;background:linear-gradient(rgba(110,110,110,0),#6a6a6a 30%)"></div><div style="position:absolute;left:1554px;top:209px;width:1px;height:25px;background:linear-gradient(rgba(110,110,110,0),#6a6a6a 30%)"></div><div style="position:absolute;left:1634px;top:209px;width:1px;height:25px;background:linear-gradient(rgba(110,110,110,0),#6a6a6a 30%)"></div><div style="position:absolute;left:1714px;top:209px;width:1px;height:25px;background:linear-gradient(rgba(110,110,110,0),#6a6a6a 30%)"></div><div style="position:absolute;left:1837px;top:209px;width:1px;height:25px;background:linear-gradient(rgba(110,110,110,0),#6a6a6a 30%)"></div><svg style="position:absolute;left:0;top:211px" width="33" height="23"><polygon points="14,21 30,21 30,5" fill="#6e6e6e"/></svg><div style="position:absolute;left:33px;top:309px;width:1861px;height:1px;background:#d0d0d0;"></div><div style="position:absolute;left:33px;top:333px;width:1861px;height:1px;background:#d0d0d0;"></div><div style="position:absolute;left:33px;top:359px;width:1861px;height:1px;background:#d0d0d0;"></div><div style="position:absolute;left:33px;top:385px;width:1861px;height:1px;background:#d0d0d0;"></div><div style="position:absolute;left:33px;top:425px;width:1861px;height:1px;background:#d0d0d0;"></div><div style="position:absolute;left:33px;top:450px;width:1861px;height:1px;background:#d0d0d0;"></div><div style="position:absolute;left:33px;top:474px;width:1861px;height:1px;background:#d0d0d0;"></div><div style="position:absolute;left:33px;top:498px;width:1861px;height:1px;background:#d0d0d0;"></div><div style="position:absolute;left:33px;top:522px;width:1861px;height:1px;background:#d0d0d0;"></div><div style="position:absolute;left:33px;top:546px;width:1861px;height:1px;background:#d0d0d0;"></div><div style="position:absolute;left:33px;top:570px;width:1861px;height:1px;background:#d0d0d0;"></div><div style="position:absolute;left:33px;top:594px;width:1861px;height:1px;background:#d0d0d0;"></div><div style="position:absolute;left:33px;top:618px;width:1861px;height:1px;background:#d0d0d0;"></div><div style="position:absolute;left:33px;top:642px;width:1861px;height:1px;background:#d0d0d0;"></div><div style="position:absolute;left:33px;top:666px;width:1861px;height:1px;background:#d0d0d0;"></div><div style="position:absolute;left:33px;top:690px;width:1861px;height:1px;background:#d0d0d0;"></div><div style="position:absolute;left:33px;top:714px;width:1861px;height:1px;background:#d0d0d0;"></div><div style="position:absolute;left:33px;top:738px;width:1861px;height:1px;background:#d0d0d0;"></div><div style="position:absolute;left:33px;top:762px;width:1861px;height:1px;background:#d0d0d0;"></div><div style="position:absolute;left:33px;top:786px;width:1861px;height:1px;background:#d0d0d0;"></div><div style="position:absolute;left:33px;top:810px;width:1861px;height:1px;background:#d0d0d0;"></div><div style="position:absolute;left:33px;top:834px;width:1861px;height:1px;background:#d0d0d0;"></div><div style="position:absolute;left:33px;top:858px;width:1861px;height:1px;background:#d0d0d0;"></div><div style="position:absolute;left:33px;top:882px;width:1861px;height:1px;background:#d0d0d0;"></div><div style="position:absolute;left:33px;top:906px;width:1861px;height:1px;background:#d0d0d0;"></div><div style="position:absolute;left:33px;top:930px;width:1861px;height:1px;background:#d0d0d0;"></div><div style="position:absolute;left:137px;top:234px;width:1px;height:692px;background:#d0d0d0;"></div><div style="position:absolute;left:237px;top:234px;width:1px;height:692px;background:#d0d0d0;"></div><div style="position:absolute;left:353px;top:234px;width:1px;height:692px;background:#d0d0d0;"></div><div style="position:absolute;left:476px;top:234px;width:1px;height:692px;background:#d0d0d0;"></div><div style="position:absolute;left:596px;top:234px;width:1px;height:692px;background:#d0d0d0;"></div><div style="position:absolute;left:716px;top:234px;width:1px;height:692px;background:#d0d0d0;"></div><div style="position:absolute;left:905px;top:234px;width:1px;height:692px;background:#d0d0d0;"></div><div style="position:absolute;left:1027px;top:234px;width:1px;height:692px;background:#d0d0d0;"></div><div style="position:absolute;left:1168px;top:234px;width:1px;height:692px;background:#d0d0d0;"></div><div style="position:absolute;left:1282px;top:234px;width:1px;height:692px;background:#d0d0d0;"></div><div style="position:absolute;left:1394px;top:234px;width:1px;height:692px;background:#d0d0d0;"></div><div style="position:absolute;left:1474px;top:234px;width:1px;height:692px;background:#d0d0d0;"></div><div style="position:absolute;left:1554px;top:234px;width:1px;height:692px;background:#d0d0d0;"></div><div style="position:absolute;left:1634px;top:234px;width:1px;height:692px;background:#d0d0d0;"></div><div style="position:absolute;left:1714px;top:234px;width:1px;height:692px;background:#d0d0d0;"></div><div style="position:absolute;left:1837px;top:234px;width:1px;height:692px;background:#d0d0d0;"></div><div style="position:absolute;left:1837px;top:234px;width:1px;height:692px;background:#d0d0d0;"></div><div style="position:absolute;left:34px;top:234px;width:1441px;height:76px;background:#325596;"></div><div style="position:absolute;left:137px;top:310px;width:1px;height:23px;background:#ffffff;"></div><div style="position:absolute;left:137px;top:334px;width:1px;height:25px;background:#ffffff;"></div><div style="position:absolute;left:33px;top:386px;width:1441px;height:39px;background:#ffffff;"></div><div style="position:absolute;left:33px;top:427px;width:1441px;height:23px;background:#fff2cc;"></div><div style="position:absolute;left:33px;top:451px;width:1441px;height:23px;background:#ffffff;"></div><div style="position:absolute;left:33px;top:475px;width:1441px;height:23px;background:#fff2cc;"></div><div style="position:absolute;left:33px;top:499px;width:1441px;height:23px;background:#ffffff;"></div><div style="position:absolute;left:33px;top:523px;width:1441px;height:23px;background:#fff2cc;"></div><div style="position:absolute;left:33px;top:547px;width:1441px;height:23px;background:#ffffff;"></div><div style="position:absolute;left:33px;top:571px;width:1441px;height:23px;background:#fff2cc;"></div><div style="position:absolute;left:33px;top:595px;width:1441px;height:23px;background:#ffffff;"></div><div style="position:absolute;left:33px;top:619px;width:1441px;height:23px;background:#fff2cc;"></div><div style="position:absolute;left:33px;top:643px;width:1441px;height:23px;background:#ffffff;"></div><div style="position:absolute;left:33px;top:667px;width:1441px;height:23px;background:#fff2cc;"></div><div style="position:absolute;left:33px;top:691px;width:1441px;height:23px;background:#ffffff;"></div><div style="position:absolute;left:33px;top:715px;width:1441px;height:23px;background:#fff2cc;"></div><div style="position:absolute;left:33px;top:739px;width:1441px;height:23px;background:#ffffff;"></div><div style="position:absolute;left:33px;top:763px;width:1441px;height:23px;background:#fff2cc;"></div><div style="position:absolute;left:33px;top:787px;width:1441px;height:23px;background:#ffffff;"></div><div style="position:absolute;left:33px;top:811px;width:1441px;height:23px;background:#fff2cc;"></div><div style="position:absolute;left:33px;top:835px;width:1441px;height:23px;background:#ffffff;"></div><div style="position:absolute;left:33px;top:859px;width:1441px;height:23px;background:#fff2cc;"></div><div style="position:absolute;left:33px;top:883px;width:1441px;height:23px;background:#ffffff;"></div><div style="position:absolute;left:33px;top:907px;width:1441px;height:23px;background:#fff2cc;"></div><div style="position:absolute;left:33px;top:385px;width:1442px;height:1px;background:#f2d04f;"></div><div style="position:absolute;left:33px;top:425px;width:1442px;height:2px;background:#f4c430;"></div><div style="position:absolute;left:33px;top:450px;width:1442px;height:1px;background:#f2d04f;"></div><div style="position:absolute;left:33px;top:474px;width:1442px;height:1px;background:#f2d04f;"></div><div style="position:absolute;left:33px;top:498px;width:1442px;height:1px;background:#f2d04f;"></div><div style="position:absolute;left:33px;top:522px;width:1442px;height:1px;background:#f2d04f;"></div><div style="position:absolute;left:33px;top:546px;width:1442px;height:1px;background:#f2d04f;"></div><div style="position:absolute;left:33px;top:570px;width:1442px;height:1px;background:#f2d04f;"></div><div style="position:absolute;left:33px;top:594px;width:1442px;height:1px;background:#f2d04f;"></div><div style="position:absolute;left:33px;top:618px;width:1442px;height:1px;background:#f2d04f;"></div><div style="position:absolute;left:33px;top:642px;width:1442px;height:1px;background:#f2d04f;"></div><div style="position:absolute;left:33px;top:666px;width:1442px;height:1px;background:#f2d04f;"></div><div style="position:absolute;left:33px;top:690px;width:1442px;height:1px;background:#f2d04f;"></div><div style="position:absolute;left:33px;top:714px;width:1442px;height:1px;background:#f2d04f;"></div><div style="position:absolute;left:33px;top:738px;width:1442px;height:1px;background:#f2d04f;"></div><div style="position:absolute;left:33px;top:762px;width:1442px;height:1px;background:#f2d04f;"></div><div style="position:absolute;left:33px;top:786px;width:1442px;height:1px;background:#f2d04f;"></div><div style="position:absolute;left:33px;top:810px;width:1442px;height:1px;background:#f2d04f;"></div><div style="position:absolute;left:33px;top:834px;width:1442px;height:1px;background:#f2d04f;"></div><div style="position:absolute;left:33px;top:858px;width:1442px;height:1px;background:#f2d04f;"></div><div style="position:absolute;left:33px;top:882px;width:1442px;height:1px;background:#f2d04f;"></div><div style="position:absolute;left:33px;top:906px;width:1442px;height:1px;background:#f2d04f;"></div><div style="position:absolute;left:33px;top:930px;width:1442px;height:1px;background:#f2d04f;"></div><div style="position:absolute;left:137px;top:385px;width:1px;height:541px;background:#f2d04f;"></div><div style="position:absolute;left:237px;top:385px;width:1px;height:541px;background:#f2d04f;"></div><div style="position:absolute;left:353px;top:385px;width:1px;height:541px;background:#f2d04f;"></div><div style="position:absolute;left:476px;top:385px;width:1px;height:541px;background:#f2d04f;"></div><div style="position:absolute;left:596px;top:385px;width:1px;height:541px;background:#f2d04f;"></div><div style="position:absolute;left:716px;top:385px;width:1px;height:541px;background:#f2d04f;"></div><div style="position:absolute;left:905px;top:385px;width:1px;height:541px;background:#f2d04f;"></div><div style="position:absolute;left:1027px;top:385px;width:1px;height:541px;background:#f2d04f;"></div><div style="position:absolute;left:1168px;top:385px;width:1px;height:541px;background:#f2d04f;"></div><div style="position:absolute;left:1282px;top:385px;width:1px;height:541px;background:#f2d04f;"></div><div style="position:absolute;left:1394px;top:385px;width:1px;height:541px;background:#f2d04f;"></div><div style="position:absolute;left:1474px;top:385px;width:1px;height:541px;background:#f2d04f;"></div><div style="position:absolute;left:0px;top:309px;width:33px;height:1px;background:#7a7a7a;"></div><div style="position:absolute;left:16.50px;top:291.00px;font:normal 15px/15px 'Liberation Sans', sans-serif;color:#e8e8e8;white-space:nowrap;transform:translateX(-50%);">1</div><div style="position:absolute;left:0px;top:333px;width:33px;height:1px;background:#7a7a7a;"></div><div style="position:absolute;left:16.50px;top:315.00px;font:normal 15px/15px 'Liberation Sans', sans-serif;color:#e8e8e8;white-space:nowrap;transform:translateX(-50%);">2</div><div style="position:absolute;left:0px;top:359px;width:33px;height:1px;background:#7a7a7a;"></div><div style="position:absolute;left:16.50px;top:341.00px;font:normal 15px/15px 'Liberation Sans', sans-serif;color:#e8e8e8;white-space:nowrap;transform:translateX(-50%);">3</div><div style="position:absolute;left:0px;top:385px;width:33px;height:1px;background:#7a7a7a;"></div><div style="position:absolute;left:16.50px;top:367.00px;font:normal 15px/15px 'Liberation Sans', sans-serif;color:#e8e8e8;white-space:nowrap;transform:translateX(-50%);">4</div><div style="position:absolute;left:0px;top:425px;width:33px;height:1px;background:#7a7a7a;"></div><div style="position:absolute;left:16.50px;top:407.00px;font:normal 15px/15px 'Liberation Sans', sans-serif;color:#e8e8e8;white-space:nowrap;transform:translateX(-50%);">5</div><div style="position:absolute;left:0px;top:450px;width:33px;height:1px;background:#7a7a7a;"></div><div style="position:absolute;left:16.50px;top:432.00px;font:normal 15px/15px 'Liberation Sans', sans-serif;color:#e8e8e8;white-space:nowrap;transform:translateX(-50%);">6</div><div style="position:absolute;left:0px;top:474px;width:33px;height:1px;background:#7a7a7a;"></div><div style="position:absolute;left:16.50px;top:456.00px;font:normal 15px/15px 'Liberation Sans', sans-serif;color:#e8e8e8;white-space:nowrap;transform:translateX(-50%);">7</div><div style="position:absolute;left:0px;top:498px;width:33px;height:1px;background:#7a7a7a;"></div><div style="position:absolute;left:16.50px;top:480.00px;font:normal 15px/15px 'Liberation Sans', sans-serif;color:#e8e8e8;white-space:nowrap;transform:translateX(-50%);">8</div><div style="position:absolute;left:0px;top:522px;width:33px;height:1px;background:#7a7a7a;"></div><div style="position:absolute;left:16.50px;top:504.00px;font:normal 15px/15px 'Liberation Sans', sans-serif;color:#e8e8e8;white-space:nowrap;transform:translateX(-50%);">9</div><div style="position:absolute;left:0px;top:546px;width:33px;height:1px;background:#7a7a7a;"></div><div style="position:absolute;left:16.50px;top:528.00px;font:normal 15px/15px 'Liberation Sans', sans-serif;color:#e8e8e8;white-space:nowrap;transform:translateX(-50%);">10</div><div style="position:absolute;left:0px;top:570px;width:33px;height:1px;background:#7a7a7a;"></div><div style="position:absolute;left:16.50px;top:552.00px;font:normal 15px/15px 'Liberation Sans', sans-serif;color:#e8e8e8;white-space:nowrap;transform:translateX(-50%);">11</div><div style="position:absolute;left:0px;top:594px;width:33px;height:1px;background:#7a7a7a;"></div><div style="position:absolute;left:16.50px;top:576.00px;font:normal 15px/15px 'Liberation Sans', sans-serif;color:#e8e8e8;white-space:nowrap;transform:translateX(-50%);">12</div><div style="position:absolute;left:0px;top:618px;width:33px;height:1px;background:#7a7a7a;"></div><div style="position:absolute;left:16.50px;top:600.00px;font:normal 15px/15px 'Liberation Sans', sans-serif;color:#e8e8e8;white-space:nowrap;transform:translateX(-50%);">13</div><div style="position:absolute;left:0px;top:642px;width:33px;height:1px;background:#7a7a7a;"></div><div style="position:absolute;left:16.50px;top:624.00px;font:normal 15px/15px 'Liberation Sans', sans-serif;color:#e8e8e8;white-space:nowrap;transform:translateX(-50%);">14</div><div style="position:absolute;left:0px;top:666px;width:33px;height:1px;background:#7a7a7a;"></div><div style="position:absolute;left:16.50px;top:648.00px;font:normal 15px/15px 'Liberation Sans', sans-serif;color:#e8e8e8;white-space:nowrap;transform:translateX(-50%);">15</div><div style="position:absolute;left:0px;top:690px;width:33px;height:1px;background:#7a7a7a;"></div><div style="position:absolute;left:16.50px;top:672.00px;font:normal 15px/15px 'Liberation Sans', sans-serif;color:#e8e8e8;white-space:nowrap;transform:translateX(-50%);">16</div><div style="position:absolute;left:0px;top:714px;width:33px;height:1px;background:#7a7a7a;"></div><div style="position:absolute;left:16.50px;top:696.00px;font:normal 15px/15px 'Liberation Sans', sans-serif;color:#e8e8e8;white-space:nowrap;transform:translateX(-50%);">17</div><div style="position:absolute;left:0px;top:738px;width:33px;height:1px;background:#7a7a7a;"></div><div style="position:absolute;left:16.50px;top:720.00px;font:normal 15px/15px 'Liberation Sans', sans-serif;color:#e8e8e8;white-space:nowrap;transform:translateX(-50%);">18</div><div style="position:absolute;left:0px;top:762px;width:33px;height:1px;background:#7a7a7a;"></div><div style="position:absolute;left:16.50px;top:744.00px;font:normal 15px/15px 'Liberation Sans', sans-serif;color:#e8e8e8;white-space:nowrap;transform:translateX(-50%);">19</div><div style="position:absolute;left:0px;top:786px;width:33px;height:1px;background:#7a7a7a;"></div><div style="position:absolute;left:16.50px;top:768.00px;font:normal 15px/15px 'Liberation Sans', sans-serif;color:#e8e8e8;white-space:nowrap;transform:translateX(-50%);">20</div><div style="position:absolute;left:0px;top:810px;width:33px;height:1px;background:#7a7a7a;"></div><div style="position:absolute;left:16.50px;top:792.00px;font:normal 15px/15px 'Liberation Sans', sans-serif;color:#e8e8e8;white-space:nowrap;transform:translateX(-50%);">21</div><div style="position:absolute;left:0px;top:834px;width:33px;height:1px;background:#7a7a7a;"></div><div style="position:absolute;left:16.50px;top:816.00px;font:normal 15px/15px 'Liberation Sans', sans-serif;color:#e8e8e8;white-space:nowrap;transform:translateX(-50%);">22</div><div style="position:absolute;left:0px;top:858px;width:33px;height:1px;background:#7a7a7a;"></div><div style="position:absolute;left:16.50px;top:840.00px;font:normal 15px/15px 'Liberation Sans', sans-serif;color:#e8e8e8;white-space:nowrap;transform:translateX(-50%);">23</div><div style="position:absolute;left:0px;top:882px;width:33px;height:1px;background:#7a7a7a;"></div><div style="position:absolute;left:16.50px;top:864.00px;font:normal 15px/15px 'Liberation Sans', sans-serif;color:#e8e8e8;white-space:nowrap;transform:translateX(-50%);">24</div><div style="position:absolute;left:0px;top:906px;width:33px;height:1px;background:#7a7a7a;"></div><div style="position:absolute;left:16.50px;top:888.00px;font:normal 15px/15px 'Liberation Sans', sans-serif;color:#e8e8e8;white-space:nowrap;transform:translateX(-50%);">25</div><div style="position:absolute;left:0px;top:930px;width:33px;height:1px;background:#7a7a7a;"></div><div style="position:absolute;left:16.50px;top:912.00px;font:normal 15px/15px 'Liberation Sans', sans-serif;color:#e8e8e8;white-space:nowrap;transform:translateX(-50%);">26</div><div style="position:absolute;left:33px;top:234px;width:1px;height:692px;background:#8a8a8a;"></div><div style="position:absolute;left:361.60px;top:249.00px;font:normal 48px/48px 'Liberation Sans', sans-serif;color:#ffd966;white-space:nowrap;letter-spacing:3.024px;-webkit-text-stroke:1.6px #ffd966;">Trinkets</div><div style="position:absolute;left:571.70px;top:249.00px;font:normal 48px/48px 'Liberation Sans', sans-serif;color:#ffd966;white-space:nowrap;letter-spacing:2.577px;-webkit-text-stroke:1.6px #ffd966;">Toys</div><div style="position:absolute;left:698.40px;top:249.00px;font:normal 48px/48px 'Liberation Sans', sans-serif;color:#ffd966;white-space:nowrap;letter-spacing:0.382px;-webkit-text-stroke:1.6px #ffd966;">&amp;</div><div style="position:absolute;left:749.50px;top:249.00px;font:normal 48px/48px 'Liberation Sans', sans-serif;color:#ffd966;white-space:nowrap;letter-spacing:-1.700px;-webkit-text-stroke:1.6px #ffd966;">Games</div><div style="position:absolute;left:910.50px;top:290.50px;font:bold 16px/16px 'Liberation Sans', sans-serif;color:#ffd966;white-space:nowrap;letter-spacing:-1.867px;">LLC</div><div style="position:absolute;left:37.60px;top:315.00px;font:bold 15.87px/15.87px 'Liberation Sans', sans-serif;color:#000;white-space:nowrap;">Monthly Transactions:</div><div style="position:absolute;left:357.60px;top:315.00px;font:normal 16px/16px 'Liberation Sans', sans-serif;color:#000;white-space:nowrap;letter-spacing:-0.244px;">June 2024</div><div style="position:absolute;left:37.60px;top:339.00px;font:bold 16.4px/16.4px 'Liberation Sans', sans-serif;color:#000;white-space:nowrap;">Instant Rebate</div><div style="position:absolute;left:357.60px;top:340.00px;font:normal 16px/16px 'Liberation Sans', sans-serif;color:#000;white-space:nowrap;letter-spacing:-0.531px;">10%</div><div style="position:absolute;left:34px;top:386px;width:103px;height:39px;overflow:hidden"><div style="position:absolute;left:51.0px;top:21.80000000000001px;font:bold 16px/16px 'Liberation Sans', sans-serif;color:#000;white-space:nowrap;transform:translateX(-50%)">Trans_No</div></div><div style="position:absolute;left:116px;top:404px;width:19px;height:19px;border:1px solid #c4c4c4;background:linear-gradient(#ffffff,#e4e7ec);"></div><svg style="position:absolute;left:116px;top:404px" width="21" height="21"><polygon points="7,9.5 14,9.5 10.5,13.5" fill="#595959"/></svg><div style="position:absolute;left:138px;top:386px;width:99px;height:39px;overflow:hidden"><div style="position:absolute;left:49.0px;top:21.80000000000001px;font:bold 16px/16px 'Liberation Sans', sans-serif;color:#000;white-space:nowrap;transform:translateX(-50%)">Date</div></div><div style="position:absolute;left:216px;top:404px;width:19px;height:19px;border:1px solid #c4c4c4;background:linear-gradient(#ffffff,#e4e7ec);"></div><svg style="position:absolute;left:216px;top:404px" width="21" height="21"><polygon points="7,9.5 14,9.5 10.5,13.5" fill="#595959"/></svg><div style="position:absolute;left:238px;top:386px;width:115px;height:39px;overflow:hidden"><div style="position:absolute;left:57.0px;top:21.80000000000001px;font:bold 16px/16px 'Liberation Sans', sans-serif;color:#000;white-space:nowrap;transform:translateX(-50%)">Sales_Last</div></div><div style="position:absolute;left:332px;top:404px;width:19px;height:19px;border:1px solid #c4c4c4;background:linear-gradient(#ffffff,#e4e7ec);"></div><svg style="position:absolute;left:332px;top:404px" width="21" height="21"><polygon points="7,9.5 14,9.5 10.5,13.5" fill="#595959"/></svg><div style="position:absolute;left:354px;top:386px;width:122px;height:39px;overflow:hidden"><div style="position:absolute;left:60.5px;top:21.80000000000001px;font:bold 16px/16px 'Liberation Sans', sans-serif;color:#000;white-space:nowrap;transform:translateX(-50%)">Department</div></div><div style="position:absolute;left:455px;top:404px;width:19px;height:19px;border:1px solid #c4c4c4;background:linear-gradient(#ffffff,#e4e7ec);"></div><svg style="position:absolute;left:455px;top:404px" width="21" height="21"><polygon points="7,9.5 14,9.5 10.5,13.5" fill="#595959"/></svg><div style="position:absolute;left:477px;top:386px;width:119px;height:39px;overflow:hidden"><div style="position:absolute;left:59.0px;top:21.80000000000001px;font:bold 16px/16px 'Liberation Sans', sans-serif;color:#000;white-space:nowrap;transform:translateX(-50%)">Item#</div></div><div style="position:absolute;left:575px;top:404px;width:19px;height:19px;border:1px solid #c4c4c4;background:linear-gradient(#ffffff,#e4e7ec);"></div><svg style="position:absolute;left:575px;top:404px" width="21" height="21"><polygon points="7,9.5 14,9.5 10.5,13.5" fill="#595959"/></svg><div style="position:absolute;left:597px;top:386px;width:119px;height:39px;overflow:hidden"><div style="position:absolute;left:59.0px;top:21.80000000000001px;font:bold 16px/16px 'Liberation Sans', sans-serif;color:#000;white-space:nowrap;transform:translateX(-50%)">Manufacturer</div></div><div style="position:absolute;left:695px;top:404px;width:19px;height:19px;border:1px solid #c4c4c4;background:linear-gradient(#ffffff,#e4e7ec);"></div><svg style="position:absolute;left:695px;top:404px" width="21" height="21"><polygon points="7,9.5 14,9.5 10.5,13.5" fill="#595959"/></svg><div style="position:absolute;left:717px;top:386px;width:188px;height:39px;overflow:hidden"><div style="position:absolute;left:93.5px;top:21.80000000000001px;font:bold 16px/16px 'Liberation Sans', sans-serif;color:#000;white-space:nowrap;transform:translateX(-50%)">Pay_Type</div></div><div style="position:absolute;left:884px;top:404px;width:19px;height:19px;border:1px solid #c4c4c4;background:linear-gradient(#ffffff,#e4e7ec);"></div><svg style="position:absolute;left:884px;top:404px" width="21" height="21"><polygon points="7,9.5 14,9.5 10.5,13.5" fill="#595959"/></svg><div style="position:absolute;left:906px;top:386px;width:121px;height:39px;overflow:hidden"><div style="position:absolute;left:60.0px;top:21.80000000000001px;font:bold 16px/16px 'Liberation Sans', sans-serif;color:#000;white-space:nowrap;transform:translateX(-50%)">Trans_Type</div></div><div style="position:absolute;left:1006px;top:404px;width:19px;height:19px;border:1px solid #c4c4c4;background:linear-gradient(#ffffff,#e4e7ec);"></div><svg style="position:absolute;left:1006px;top:404px" width="21" height="21"><polygon points="7,9.5 14,9.5 10.5,13.5" fill="#595959"/></svg><div style="position:absolute;left:1028px;top:386px;width:140px;height:39px;overflow:hidden"><div style="position:absolute;left:69.5px;top:21.80000000000001px;font:bold 16px/16px 'Liberation Sans', sans-serif;color:#000;white-space:nowrap;transform:translateX(-50%)">Quantity</div></div><div style="position:absolute;left:1147px;top:404px;width:19px;height:19px;border:1px solid #c4c4c4;background:linear-gradient(#ffffff,#e4e7ec);"></div><svg style="position:absolute;left:1147px;top:404px" width="21" height="21"><polygon points="7,9.5 14,9.5 10.5,13.5" fill="#595959"/></svg><div style="position:absolute;left:1169px;top:386px;width:113px;height:39px;overflow:hidden"><div style="position:absolute;left:56.0px;top:21.80000000000001px;font:bold 16px/16px 'Liberation Sans', sans-serif;color:#000;white-space:nowrap;transform:translateX(-50%)">Purchase_Price</div></div><div style="position:absolute;left:1261px;top:404px;width:19px;height:19px;border:1px solid #c4c4c4;background:linear-gradient(#ffffff,#e4e7ec);"></div><svg style="position:absolute;left:1261px;top:404px" width="21" height="21"><polygon points="7,9.5 14,9.5 10.5,13.5" fill="#595959"/></svg><div style="position:absolute;left:1283px;top:386px;width:111px;height:39px;overflow:hidden"><div style="position:absolute;left:55.0px;top:21.80000000000001px;font:bold 16px/16px 'Liberation Sans', sans-serif;color:#000;white-space:nowrap;transform:translateX(-50%)">Rebate</div></div><div style="position:absolute;left:1373px;top:404px;width:19px;height:19px;border:1px solid #c4c4c4;background:linear-gradient(#ffffff,#e4e7ec);"></div><svg style="position:absolute;left:1373px;top:404px" width="21" height="21"><polygon points="7,9.5 14,9.5 10.5,13.5" fill="#595959"/></svg><div style="position:absolute;left:1395px;top:386px;width:79px;height:39px;overflow:hidden"><div style="position:absolute;left:39.0px;top:21.80000000000001px;font:bold 16px/16px 'Liberation Sans', sans-serif;color:#000;white-space:nowrap;transform:translateX(-50%)">Owed</div></div><div style="position:absolute;left:1453px;top:404px;width:19px;height:19px;border:1px solid #c4c4c4;background:linear-gradient(#ffffff,#e4e7ec);"></div><svg style="position:absolute;left:1453px;top:404px" width="21" height="21"><polygon points="7,9.5 14,9.5 10.5,13.5" fill="#595959"/></svg><div style="position:absolute;left:1396px;top:428px;width:78px;height:22px;background:#ffc7ce;"></div><div style="position:absolute;left:1284px;top:428px;width:106px;height:18px;border:1px solid #638ec6;border-left-width:1px;background:linear-gradient(90deg,#638ec6,#ffffff);box-sizing:content-box"></div><div style="position:absolute;left:37.60px;top:432.40px;font:normal 16px/16px 'Liberation Sans', sans-serif;color:#000;white-space:nowrap;letter-spacing:0.030px;">2024-001</div><div style="position:absolute;left:187.31px;top:432.40px;font:normal 16px/16px 'Liberation Sans', sans-serif;color:#000;white-space:nowrap;letter-spacing:0.611px;transform:translateX(-50%);">6/1/2024</div><div style="position:absolute;left:241.70px;top:432.40px;font:normal 16px/16px 'Liberation Sans', sans-serif;color:#000;white-space:nowrap;letter-spacing:-0.594px;">Shah</div><div style="position:absolute;left:357.60px;top:432.40px;font:normal 16px/16px 'Liberation Sans', sans-serif;color:#000;white-space:nowrap;letter-spacing:-0.046px;">Electronics</div><div style="position:absolute;left:480.70px;top:432.40px;font:normal 16px/16px 'Liberation Sans', sans-serif;color:#000;white-space:nowrap;letter-spacing:0.026px;">1005</div><div style="position:absolute;left:600.50px;top:432.40px;font:normal 16px/16px 'Liberation Sans', sans-serif;color:#000;white-space:nowrap;letter-spacing:-0.475px;">Sony</div><div style="position:absolute;left:720.30px;top:432.40px;font:normal 16px/16px 'Liberation Sans', sans-serif;color:#000;white-space:nowrap;letter-spacing:-0.168px;">Financed</div><div style="position:absolute;left:909.70px;top:432.40px;font:normal 16px/16px 'Liberation Sans', sans-serif;color:#000;white-space:nowrap;letter-spacing:0.375px;">Promotion</div><div style="position:absolute;left:1097.51px;top:432.40px;font:normal 16px/16px 'Liberation Sans', sans-serif;color:#000;white-space:nowrap;letter-spacing:0.026px;transform:translateX(-50%);">2</div><div style="position:absolute;left:1273.42px;top:432.40px;font:normal 16px/16px 'Liberation Sans', sans-serif;color:#000;white-space:nowrap;letter-spacing:0.020px;transform:translateX(-100%);">499.99</div><div style="position:absolute;left:1385.22px;top:432.40px;font:normal 16px/16px 'Liberation Sans', sans-serif;color:#000;white-space:nowrap;letter-spacing:0.020px;transform:translateX(-100%);">100.00</div><div style="position:absolute;left:1465.32px;top:432.40px;font:normal 16px/16px 'Liberation Sans', sans-serif;color:#9c0006;white-space:nowrap;letter-spacing:0.020px;transform:translateX(-100%);">899.98</div><div style="position:absolute;left:1284px;top:452px;width:1px;height:20px;background:#638ec6"></div><div style="position:absolute;left:37.60px;top:456.40px;font:normal 16px/16px 'Liberation Sans', sans-serif;color:#000;white-space:nowrap;letter-spacing:0.030px;">2024-002</div><div style="position:absolute;left:187.31px;top:456.40px;font:normal 16px/16px 'Liberation Sans', sans-serif;color:#000;white-space:nowrap;letter-spacing:0.611px;transform:translateX(-50%);">6/1/2024</div><div style="position:absolute;left:241.70px;top:456.40px;font:normal 16px/16px 'Liberation Sans', sans-serif;color:#000;white-space:nowrap;letter-spacing:-0.177px;">Radomanski</div><div style="position:absolute;left:357.60px;top:456.40px;font:normal 16px/16px 'Liberation Sans', sans-serif;color:#000;white-space:nowrap;letter-spacing:-0.003px;">Collectibles</div><div style="position:absolute;left:480.70px;top:456.40px;font:normal 16px/16px 'Liberation Sans', sans-serif;color:#000;white-space:nowrap;letter-spacing:0.026px;">1010</div><div style="position:absolute;left:600.50px;top:456.40px;font:normal 16px/16px 'Liberation Sans', sans-serif;color:#000;white-space:nowrap;letter-spacing:-0.107px;">Hasbro</div><div style="position:absolute;left:720.30px;top:456.40px;font:normal 16px/16px 'Liberation Sans', sans-serif;color:#000;white-space:nowrap;letter-spacing:-0.371px;">Card</div><div style="position:absolute;left:909.70px;top:456.40px;font:normal 16px/16px 'Liberation Sans', sans-serif;color:#000;white-space:nowrap;letter-spacing:0.375px;">Promotion</div><div style="position:absolute;left:1097.51px;top:456.40px;font:normal 16px/16px 'Liberation Sans', sans-serif;color:#000;white-space:nowrap;letter-spacing:0.026px;transform:translateX(-50%);">2</div><div style="position:absolute;left:1273.42px;top:456.40px;font:normal 16px/16px 'Liberation Sans', sans-serif;color:#000;white-space:nowrap;letter-spacing:0.017px;transform:translateX(-100%);">3.99</div><div style="position:absolute;left:1385.22px;top:456.40px;font:normal 16px/16px 'Liberation Sans', sans-serif;color:#000;white-space:nowrap;letter-spacing:0.017px;transform:translateX(-100%);">0.80</div><div style="position:absolute;left:1465.32px;top:456.40px;font:normal 16px/16px 'Liberation Sans', sans-serif;color:#000;white-space:nowrap;letter-spacing:0.017px;transform:translateX(-100%);">7.18</div><div style="position:absolute;left:238px;top:475px;width:115px;height:23px;background:#c6efce;"></div><div style="position:absolute;left:1284px;top:476px;width:12px;height:18px;border:1px solid #638ec6;border-left-width:1px;background:linear-gradient(90deg,#638ec6,#ffffff);box-sizing:content-box"></div><div style="position:absolute;left:37.60px;top:480.40px;font:normal 16px/16px 'Liberation Sans', sans-serif;color:#000;white-space:nowrap;letter-spacing:0.030px;">2024-003</div><div style="position:absolute;left:187.31px;top:480.40px;font:normal 16px/16px 'Liberation Sans', sans-serif;color:#000;white-space:nowrap;letter-spacing:0.611px;transform:translateX(-50%);">6/1/2024</div><div style="position:absolute;left:241.70px;top:480.40px;font:normal 16px/16px 'Liberation Sans', sans-serif;color:#006100;white-space:nowrap;letter-spacing:-0.159px;">Rodriguez</div><div style="position:absolute;left:357.60px;top:480.40px;font:normal 16px/16px 'Liberation Sans', sans-serif;color:#000;white-space:nowrap;letter-spacing:0.209px;">Infants</div><div style="position:absolute;left:480.70px;top:480.40px;font:normal 16px/16px 'Liberation Sans', sans-serif;color:#000;white-space:nowrap;letter-spacing:0.026px;">1009</div><div style="position:absolute;left:600.50px;top:480.40px;font:normal 16px/16px 'Liberation Sans', sans-serif;color:#000;white-space:nowrap;letter-spacing:-0.107px;">Hasbro</div><div style="position:absolute;left:720.30px;top:480.40px;font:normal 16px/16px 'Liberation Sans', sans-serif;color:#000;white-space:nowrap;letter-spacing:0.019px;">Store Credit</div><div style="position:absolute;left:909.70px;top:480.40px;font:normal 16px/16px 'Liberation Sans', sans-serif;color:#000;white-space:nowrap;letter-spacing:0.375px;">Promotion</div><div style="position:absolute;left:1097.51px;top:480.40px;font:normal 16px/16px 'Liberation Sans', sans-serif;color:#000;white-space:nowrap;letter-spacing:0.026px;transform:translateX(-50%);">5</div><div style="position:absolute;left:1273.42px;top:480.40px;font:normal 16px/16px 'Liberation Sans', sans-serif;color:#000;white-space:nowrap;letter-spacing:0.019px;transform:translateX(-100%);">25.99</div><div style="position:absolute;left:1385.22px;top:480.40px;font:normal 16px/16px 'Liberation Sans', sans-serif;color:#000;white-space:nowrap;letter-spacing:0.019px;transform:translateX(-100%);">13.00</div><div style="position:absolute;left:1465.52px;top:480.40px;font:normal 16px/16px 'Liberation Sans', sans-serif;color:#000;white-space:nowrap;letter-spacing:0.218px;transform:translateX(-100%);">116.96</div><div style="position:absolute;left:1284px;top:500px;width:7px;height:18px;border:1px solid #638ec6;border-left-width:1px;background:linear-gradient(90deg,#638ec6,#ffffff);box-sizing:content-box"></div><div style="position:absolute;left:37.60px;top:504.40px;font:normal 16px/16px 'Liberation Sans', sans-serif;color:#000;white-space:nowrap;letter-spacing:0.030px;">2024-004</div><div style="position:absolute;left:187.31px;top:504.40px;font:normal 16px/16px 'Liberation Sans', sans-serif;color:#000;white-space:nowrap;letter-spacing:0.611px;transform:translateX(-50%);">6/1/2024</div><div style="position:absolute;left:241.70px;top:504.40px;font:normal 16px/16px 'Liberation Sans', sans-serif;color:#000;white-space:nowrap;letter-spacing:0.158px;">McGowan</div><div style="position:absolute;left:357.60px;top:504.40px;font:normal 16px/16px 'Liberation Sans', sans-serif;color:#000;white-space:nowrap;letter-spacing:-0.056px;">Action Figures</div><div style="position:absolute;left:480.70px;top:504.40px;font:normal 16px/16px 'Liberation Sans', sans-serif;color:#000;white-space:nowrap;letter-spacing:0.026px;">1002</div><div style="position:absolute;left:600.50px;top:504.40px;font:normal 16px/16px 'Liberation Sans', sans-serif;color:#000;white-space:nowrap;letter-spacing:-0.125px;">Playmates</div><div style="position:absolute;left:720.30px;top:504.40px;font:normal 16px/16px 'Liberation Sans', sans-serif;color:#000;white-space:nowrap;letter-spacing:-0.371px;">Card</div><div style="position:absolute;left:909.70px;top:504.40px;font:normal 16px/16px 'Liberation Sans', sans-serif;color:#000;white-space:nowrap;letter-spacing:-0.029px;">Standard</div><div style="position:absolute;left:1097.51px;top:504.40px;font:normal 16px/16px 'Liberation Sans', sans-serif;color:#000;white-space:nowrap;letter-spacing:0.026px;transform:translateX(-50%);">5</div><div style="position:absolute;left:1273.42px;top:504.40px;font:normal 16px/16px 'Liberation Sans', sans-serif;color:#000;white-space:nowrap;letter-spacing:0.019px;transform:translateX(-100%);">16.25</div><div style="position:absolute;left:1385.22px;top:504.40px;font:normal 16px/16px 'Liberation Sans', sans-serif;color:#000;white-space:nowrap;letter-spacing:0.017px;transform:translateX(-100%);">8.13</div><div style="position:absolute;left:1465.32px;top:504.40px;font:normal 16px/16px 'Liberation Sans', sans-serif;color:#000;white-space:nowrap;letter-spacing:0.019px;transform:translateX(-100%);">73.13</div><div style="position:absolute;left:1284px;top:524px;width:11px;height:18px;border:1px solid #638ec6;border-left-width:1px;background:linear-gradient(90deg,#638ec6,#ffffff);box-sizing:content-box"></div><div style="position:absolute;left:37.60px;top:528.40px;font:normal 16px/16px 'Liberation Sans', sans-serif;color:#000;white-space:nowrap;letter-spacing:0.030px;">2024-005</div><div style="position:absolute;left:187.31px;top:528.40px;font:normal 16px/16px 'Liberation Sans', sans-serif;color:#000;white-space:nowrap;letter-spacing:0.611px;transform:translateX(-50%);">6/1/2024</div><div style="position:absolute;left:241.70px;top:528.40px;font:normal 16px/16px 'Liberation Sans', sans-serif;color:#000;white-space:nowrap;letter-spacing:-0.177px;">Radomanski</div><div style="position:absolute;left:357.60px;top:528.40px;font:normal 16px/16px 'Liberation Sans', sans-serif;color:#000;white-space:nowrap;letter-spacing:0.209px;">Infants</div><div style="position:absolute;left:480.70px;top:528.40px;font:normal 16px/16px 'Liberation Sans', sans-serif;color:#000;white-space:nowrap;letter-spacing:0.026px;">1013</div><div style="position:absolute;left:600.50px;top:528.40px;font:normal 16px/16px 'Liberation Sans', sans-serif;color:#000;white-space:nowrap;letter-spacing:-0.359px;">LeapFrog</div><div style="position:absolute;left:720.30px;top:528.40px;font:normal 16px/16px 'Liberation Sans', sans-serif;color:#000;white-space:nowrap;letter-spacing:-0.371px;">Card</div><div style="position:absolute;left:909.70px;top:528.40px;font:normal 16px/16px 'Liberation Sans', sans-serif;color:#000;white-space:nowrap;letter-spacing:0.375px;">Promotion</div><div style="position:absolute;left:1097.51px;top:528.40px;font:normal 16px/16px 'Liberation Sans', sans-serif;color:#000;white-space:nowrap;letter-spacing:0.026px;transform:translateX(-50%);">3</div><div style="position:absolute;left:1273.42px;top:528.40px;font:normal 16px/16px 'Liberation Sans', sans-serif;color:#000;white-space:nowrap;letter-spacing:0.019px;transform:translateX(-100%);">39.99</div><div style="position:absolute;left:1385.22px;top:528.40px;font:normal 16px/16px 'Liberation Sans', sans-serif;color:#000;white-space:nowrap;letter-spacing:0.019px;transform:translateX(-100%);">12.00</div><div style="position:absolute;left:1465.32px;top:528.40px;font:normal 16px/16px 'Liberation Sans', sans-serif;color:#000;white-space:nowrap;letter-spacing:0.020px;transform:translateX(-100%);">107.97</div><div style="position:absolute;left:1284px;top:548px;width:5px;height:18px;border:1px solid #638ec6;border-left-width:1px;background:linear-gradient(90deg,#638ec6,#ffffff);box-sizing:content-box"></div><div style="position:absolute;left:37.60px;top:552.40px;font:normal 16px/16px 'Liberation Sans', sans-serif;color:#000;white-space:nowrap;letter-spacing:0.030px;">2024-006</div><div style="position:absolute;left:187.31px;top:552.40px;font:normal 16px/16px 'Liberation Sans', sans-serif;color:#000;white-space:nowrap;letter-spacing:0.611px;transform:translateX(-50%);">6/1/2024</div><div style="position:absolute;left:241.70px;top:552.40px;font:normal 16px/16px 'Liberation Sans', sans-serif;color:#000;white-space:nowrap;letter-spacing:-0.594px;">Shah</div><div style="position:absolute;left:357.60px;top:552.40px;font:normal 16px/16px 'Liberation Sans', sans-serif;color:#000;white-space:nowrap;letter-spacing:-0.056px;">Action Figures</div><div style="position:absolute;left:480.70px;top:552.40px;font:normal 16px/16px 'Liberation Sans', sans-serif;color:#000;white-space:nowrap;letter-spacing:0.026px;">1002</div><div style="position:absolute;left:600.50px;top:552.40px;font:normal 16px/16px 'Liberation Sans', sans-serif;color:#000;white-space:nowrap;letter-spacing:-0.125px;">Playmates</div><div style="position:absolute;left:720.30px;top:552.40px;font:normal 16px/16px 'Liberation Sans', sans-serif;color:#000;white-space:nowrap;letter-spacing:-0.371px;">Card</div><div style="position:absolute;left:909.70px;top:552.40px;font:normal 16px/16px 'Liberation Sans', sans-serif;color:#000;white-space:nowrap;letter-spacing:0.375px;">Promotion</div><div style="position:absolute;left:1097.51px;top:552.40px;font:normal 16px/16px 'Liberation Sans', sans-serif;color:#000;white-space:nowrap;letter-spacing:0.026px;transform:translateX(-50%);">4</div><div style="position:absolute;left:1273.42px;top:552.40px;font:normal 16px/16px 'Liberation Sans', sans-serif;color:#000;white-space:nowrap;letter-spacing:0.019px;transform:translateX(-100%);">16.25</div><div style="position:absolute;left:1385.22px;top:552.40px;font:normal 16px/16px 'Liberation Sans', sans-serif;color:#000;white-space:nowrap;letter-spacing:0.017px;transform:translateX(-100%);">6.50</div><div style="position:absolute;left:1465.32px;top:552.40px;font:normal 16px/16px 'Liberation Sans', sans-serif;color:#000;white-space:nowrap;letter-spacing:0.019px;transform:translateX(-100%);">58.50</div><div style="position:absolute;left:1284px;top:572px;width:3px;height:18px;border:1px solid #638ec6;border-left-width:1px;background:linear-gradient(90deg,#638ec6,#ffffff);box-sizing:content-box"></div><div style="position:absolute;left:37.60px;top:576.40px;font:normal 16px/16px 'Liberation Sans', sans-serif;color:#000;white-space:nowrap;letter-spacing:0.030px;">2024-007</div><div style="position:absolute;left:187.31px;top:576.40px;font:normal 16px/16px 'Liberation Sans', sans-serif;color:#000;white-space:nowrap;letter-spacing:0.611px;transform:translateX(-50%);">6/1/2024</div><div style="position:absolute;left:241.70px;top:576.40px;font:normal 16px/16px 'Liberation Sans', sans-serif;color:#000;white-space:nowrap;letter-spacing:-0.177px;">Radomanski</div><div style="position:absolute;left:357.60px;top:576.40px;font:normal 16px/16px 'Liberation Sans', sans-serif;color:#000;white-space:nowrap;letter-spacing:-0.056px;">Action Figures</div><div style="position:absolute;left:480.70px;top:576.40px;font:normal 16px/16px 'Liberation Sans', sans-serif;color:#000;white-space:nowrap;letter-spacing:0.026px;">1001</div><div style="position:absolute;left:600.50px;top:576.40px;font:normal 16px/16px 'Liberation Sans', sans-serif;color:#000;white-space:nowrap;letter-spacing:-0.125px;">Playmates</div><div style="position:absolute;left:720.30px;top:576.40px;font:normal 16px/16px 'Liberation Sans', sans-serif;color:#000;white-space:nowrap;letter-spacing:0.019px;">Store Credit</div><div style="position:absolute;left:909.70px;top:576.40px;font:normal 16px/16px 'Liberation Sans', sans-serif;color:#000;white-space:nowrap;letter-spacing:0.375px;">Promotion</div><div style="position:absolute;left:1097.51px;top:576.40px;font:normal 16px/16px 'Liberation Sans', sans-serif;color:#000;white-space:nowrap;letter-spacing:0.026px;transform:translateX(-50%);">3</div><div style="position:absolute;left:1273.42px;top:576.40px;font:normal 16px/16px 'Liberation Sans', sans-serif;color:#000;white-space:nowrap;letter-spacing:0.019px;transform:translateX(-100%);">16.25</div><div style="position:absolute;left:1385.22px;top:576.40px;font:normal 16px/16px 'Liberation Sans', sans-serif;color:#000;white-space:nowrap;letter-spacing:0.017px;transform:translateX(-100%);">4.88</div><div style="position:absolute;left:1465.32px;top:576.40px;font:normal 16px/16px 'Liberation Sans', sans-serif;color:#000;white-space:nowrap;letter-spacing:0.019px;transform:translateX(-100%);">43.88</div><div style="position:absolute;left:1284px;top:596px;width:6px;height:18px;border:1px solid #638ec6;border-left-width:1px;background:linear-gradient(90deg,#638ec6,#ffffff);box-sizing:content-box"></div><div style="position:absolute;left:37.60px;top:600.40px;font:normal 16px/16px 'Liberation Sans', sans-serif;color:#000;white-space:nowrap;letter-spacing:0.030px;">2024-008</div><div style="position:absolute;left:187.31px;top:600.40px;font:normal 16px/16px 'Liberation Sans', sans-serif;color:#000;white-space:nowrap;letter-spacing:0.611px;transform:translateX(-50%);">6/1/2024</div><div style="position:absolute;left:241.70px;top:600.40px;font:normal 16px/16px 'Liberation Sans', sans-serif;color:#000;white-space:nowrap;letter-spacing:-0.594px;">Shah</div><div style="position:absolute;left:357.60px;top:600.40px;font:normal 16px/16px 'Liberation Sans', sans-serif;color:#000;white-space:nowrap;letter-spacing:-0.256px;">Board Games</div><div style="position:absolute;left:480.70px;top:600.40px;font:normal 16px/16px 'Liberation Sans', sans-serif;color:#000;white-space:nowrap;letter-spacing:0.026px;">1007</div><div style="position:absolute;left:600.50px;top:600.40px;font:normal 16px/16px 'Liberation Sans', sans-serif;color:#000;white-space:nowrap;letter-spacing:-0.107px;">Hasbro</div><div style="position:absolute;left:720.30px;top:600.40px;font:normal 16px/16px 'Liberation Sans', sans-serif;color:#000;white-space:nowrap;letter-spacing:0.019px;">Store Credit</div><div style="position:absolute;left:909.70px;top:600.40px;font:normal 16px/16px 'Liberation Sans', sans-serif;color:#000;white-space:nowrap;letter-spacing:0.375px;">Promotion</div><div style="position:absolute;left:1097.51px;top:600.40px;font:normal 16px/16px 'Liberation Sans', sans-serif;color:#000;white-space:nowrap;letter-spacing:0.026px;transform:translateX(-50%);">6</div><div style="position:absolute;left:1273.42px;top:600.40px;font:normal 16px/16px 'Liberation Sans', sans-serif;color:#000;white-space:nowrap;letter-spacing:0.019px;transform:translateX(-100%);">12.99</div><div style="position:absolute;left:1385.22px;top:600.40px;font:normal 16px/16px 'Liberation Sans', sans-serif;color:#000;white-space:nowrap;letter-spacing:0.017px;transform:translateX(-100%);">7.79</div><div style="position:absolute;left:1465.32px;top:600.40px;font:normal 16px/16px 'Liberation Sans', sans-serif;color:#000;white-space:nowrap;letter-spacing:0.019px;transform:translateX(-100%);">70.15</div><div style="position:absolute;left:238px;top:619px;width:115px;height:23px;background:#c6efce;"></div><div style="position:absolute;left:1284px;top:620px;width:12px;height:18px;border:1px solid #638ec6;border-left-width:1px;background:linear-gradient(90deg,#638ec6,#ffffff);box-sizing:content-box"></div><div style="position:absolute;left:37.60px;top:624.40px;font:normal 16px/16px 'Liberation Sans', sans-serif;color:#000;white-space:nowrap;letter-spacing:0.030px;">2024-009</div><div style="position:absolute;left:187.31px;top:624.40px;font:normal 16px/16px 'Liberation Sans', sans-serif;color:#000;white-space:nowrap;letter-spacing:0.611px;transform:translateX(-50%);">6/1/2024</div><div style="position:absolute;left:241.70px;top:624.40px;font:normal 16px/16px 'Liberation Sans', sans-serif;color:#006100;white-space:nowrap;letter-spacing:-0.159px;">Rodriguez</div><div style="position:absolute;left:357.60px;top:624.40px;font:normal 16px/16px 'Liberation Sans', sans-serif;color:#000;white-space:nowrap;letter-spacing:0.209px;">Infants</div><div style="position:absolute;left:480.70px;top:624.40px;font:normal 16px/16px 'Liberation Sans', sans-serif;color:#000;white-space:nowrap;letter-spacing:0.026px;">1009</div><div style="position:absolute;left:600.50px;top:624.40px;font:normal 16px/16px 'Liberation Sans', sans-serif;color:#000;white-space:nowrap;letter-spacing:-0.107px;">Hasbro</div><div style="position:absolute;left:720.30px;top:624.40px;font:normal 16px/16px 'Liberation Sans', sans-serif;color:#000;white-space:nowrap;letter-spacing:-0.854px;">Cash</div><div style="position:absolute;left:909.70px;top:624.40px;font:normal 16px/16px 'Liberation Sans', sans-serif;color:#000;white-space:nowrap;letter-spacing:-0.029px;">Standard</div><div style="position:absolute;left:1097.51px;top:624.40px;font:normal 16px/16px 'Liberation Sans', sans-serif;color:#000;white-space:nowrap;letter-spacing:0.026px;transform:translateX(-50%);">5</div><div style="position:absolute;left:1273.42px;top:624.40px;font:normal 16px/16px 'Liberation Sans', sans-serif;color:#000;white-space:nowrap;letter-spacing:0.019px;transform:translateX(-100%);">25.99</div><div style="position:absolute;left:1385.22px;top:624.40px;font:normal 16px/16px 'Liberation Sans', sans-serif;color:#000;white-space:nowrap;letter-spacing:0.019px;transform:translateX(-100%);">13.00</div><div style="position:absolute;left:1465.52px;top:624.40px;font:normal 16px/16px 'Liberation Sans', sans-serif;color:#000;white-space:nowrap;letter-spacing:0.218px;transform:translateX(-100%);">116.96</div><div style="position:absolute;left:1396px;top:644px;width:78px;height:22px;background:#ffc7ce;"></div><div style="position:absolute;left:1284px;top:644px;width:106px;height:18px;border:1px solid #638ec6;border-left-width:1px;background:linear-gradient(90deg,#638ec6,#ffffff);box-sizing:content-box"></div><div style="position:absolute;left:37.60px;top:648.40px;font:normal 16px/16px 'Liberation Sans', sans-serif;color:#000;white-space:nowrap;letter-spacing:0.030px;">2024-010</div><div style="position:absolute;left:187.31px;top:648.40px;font:normal 16px/16px 'Liberation Sans', sans-serif;color:#000;white-space:nowrap;letter-spacing:0.611px;transform:translateX(-50%);">6/2/2024</div><div style="position:absolute;left:241.70px;top:648.40px;font:normal 16px/16px 'Liberation Sans', sans-serif;color:#000;white-space:nowrap;letter-spacing:-0.594px;">Shah</div><div style="position:absolute;left:357.60px;top:648.40px;font:normal 16px/16px 'Liberation Sans', sans-serif;color:#000;white-space:nowrap;letter-spacing:-0.046px;">Electronics</div><div style="position:absolute;left:480.70px;top:648.40px;font:normal 16px/16px 'Liberation Sans', sans-serif;color:#000;white-space:nowrap;letter-spacing:0.026px;">1005</div><div style="position:absolute;left:600.50px;top:648.40px;font:normal 16px/16px 'Liberation Sans', sans-serif;color:#000;white-space:nowrap;letter-spacing:-0.475px;">Sony</div><div style="position:absolute;left:720.30px;top:648.40px;font:normal 16px/16px 'Liberation Sans', sans-serif;color:#000;white-space:nowrap;letter-spacing:0.019px;">Store Credit</div><div style="position:absolute;left:909.70px;top:648.40px;font:normal 16px/16px 'Liberation Sans', sans-serif;color:#000;white-space:nowrap;letter-spacing:0.375px;">Promotion</div><div style="position:absolute;left:1097.51px;top:648.40px;font:normal 16px/16px 'Liberation Sans', sans-serif;color:#000;white-space:nowrap;letter-spacing:0.026px;transform:translateX(-50%);">2</div><div style="position:absolute;left:1273.42px;top:648.40px;font:normal 16px/16px 'Liberation Sans', sans-serif;color:#000;white-space:nowrap;letter-spacing:0.020px;transform:translateX(-100%);">499.99</div><div style="position:absolute;left:1385.22px;top:648.40px;font:normal 16px/16px 'Liberation Sans', sans-serif;color:#000;white-space:nowrap;letter-spacing:0.020px;transform:translateX(-100%);">100.00</div><div style="position:absolute;left:1465.32px;top:648.40px;font:normal 16px/16px 'Liberation Sans', sans-serif;color:#9c0006;white-space:nowrap;letter-spacing:0.020px;transform:translateX(-100%);">899.98</div><div style="position:absolute;left:1284px;top:668px;width:52px;height:18px;border:1px solid #638ec6;border-left-width:1px;background:linear-gradient(90deg,#638ec6,#ffffff);box-sizing:content-box"></div><div style="position:absolute;left:37.60px;top:672.40px;font:normal 16px/16px 'Liberation Sans', sans-serif;color:#000;white-space:nowrap;letter-spacing:0.178px;">2024-011</div><div style="position:absolute;left:187.31px;top:672.40px;font:normal 16px/16px 'Liberation Sans', sans-serif;color:#000;white-space:nowrap;letter-spacing:0.611px;transform:translateX(-50%);">6/2/2024</div><div style="position:absolute;left:241.70px;top:672.40px;font:normal 16px/16px 'Liberation Sans', sans-serif;color:#000;white-space:nowrap;letter-spacing:-0.177px;">Radomanski</div><div style="position:absolute;left:357.60px;top:672.40px;font:normal 16px/16px 'Liberation Sans', sans-serif;color:#000;white-space:nowrap;letter-spacing:-0.046px;">Electronics</div><div style="position:absolute;left:480.70px;top:672.40px;font:normal 16px/16px 'Liberation Sans', sans-serif;color:#000;white-space:nowrap;letter-spacing:0.026px;">1005</div><div style="position:absolute;left:600.50px;top:672.40px;font:normal 16px/16px 'Liberation Sans', sans-serif;color:#000;white-space:nowrap;letter-spacing:-0.475px;">Sony</div><div style="position:absolute;left:720.30px;top:672.40px;font:normal 16px/16px 'Liberation Sans', sans-serif;color:#000;white-space:nowrap;letter-spacing:-0.168px;">Financed</div><div style="position:absolute;left:909.70px;top:672.40px;font:normal 16px/16px 'Liberation Sans', sans-serif;color:#000;white-space:nowrap;letter-spacing:0.375px;">Promotion</div><div style="position:absolute;left:1097.51px;top:672.40px;font:normal 16px/16px 'Liberation Sans', sans-serif;color:#000;white-space:nowrap;letter-spacing:0.026px;transform:translateX(-50%);">1</div><div style="position:absolute;left:1273.42px;top:672.40px;font:normal 16px/16px 'Liberation Sans', sans-serif;color:#000;white-space:nowrap;letter-spacing:0.020px;transform:translateX(-100%);">499.99</div><div style="position:absolute;left:1385.22px;top:672.40px;font:normal 16px/16px 'Liberation Sans', sans-serif;color:#000;white-space:nowrap;letter-spacing:0.019px;transform:translateX(-100%);">50.00</div><div style="position:absolute;left:1465.32px;top:672.40px;font:normal 16px/16px 'Liberation Sans', sans-serif;color:#000;white-space:nowrap;letter-spacing:0.020px;transform:translateX(-100%);">449.99</div><div style="position:absolute;left:1284px;top:692px;width:1px;height:18px;border:1px solid #638ec6;border-left-width:1px;background:linear-gradient(90deg,#638ec6,#ffffff);box-sizing:content-box"></div><div style="position:absolute;left:37.60px;top:696.40px;font:normal 16px/16px 'Liberation Sans', sans-serif;color:#000;white-space:nowrap;letter-spacing:0.030px;">2024-012</div><div style="position:absolute;left:187.31px;top:696.40px;font:normal 16px/16px 'Liberation Sans', sans-serif;color:#000;white-space:nowrap;letter-spacing:0.611px;transform:translateX(-50%);">6/2/2024</div><div style="position:absolute;left:241.70px;top:696.40px;font:normal 16px/16px 'Liberation Sans', sans-serif;color:#000;white-space:nowrap;letter-spacing:-0.177px;">Radomanski</div><div style="position:absolute;left:357.60px;top:696.40px;font:normal 16px/16px 'Liberation Sans', sans-serif;color:#000;white-space:nowrap;letter-spacing:0.209px;">Infants</div><div style="position:absolute;left:480.70px;top:696.40px;font:normal 16px/16px 'Liberation Sans', sans-serif;color:#000;white-space:nowrap;letter-spacing:0.026px;">1009</div><div style="position:absolute;left:600.50px;top:696.40px;font:normal 16px/16px 'Liberation Sans', sans-serif;color:#000;white-space:nowrap;letter-spacing:-0.107px;">Hasbro</div><div style="position:absolute;left:720.30px;top:696.40px;font:normal 16px/16px 'Liberation Sans', sans-serif;color:#000;white-space:nowrap;letter-spacing:-0.854px;">Cash</div><div style="position:absolute;left:909.70px;top:696.40px;font:normal 16px/16px 'Liberation Sans', sans-serif;color:#000;white-space:nowrap;letter-spacing:-0.029px;">Standard</div><div style="position:absolute;left:1097.51px;top:696.40px;font:normal 16px/16px 'Liberation Sans', sans-serif;color:#000;white-space:nowrap;letter-spacing:0.026px;transform:translateX(-50%);">1</div><div style="position:absolute;left:1273.42px;top:696.40px;font:normal 16px/16px 'Liberation Sans', sans-serif;color:#000;white-space:nowrap;letter-spacing:0.019px;transform:translateX(-100%);">25.99</div><div style="position:absolute;left:1385.22px;top:696.40px;font:normal 16px/16px 'Liberation Sans', sans-serif;color:#000;white-space:nowrap;letter-spacing:0.017px;transform:translateX(-100%);">2.60</div><div style="position:absolute;left:1465.32px;top:696.40px;font:normal 16px/16px 'Liberation Sans', sans-serif;color:#000;white-space:nowrap;letter-spacing:0.019px;transform:translateX(-100%);">23.39</div><div style="position:absolute;left:1396px;top:716px;width:78px;height:22px;background:#ffc7ce;"></div><div style="position:absolute;left:1284px;top:716px;width:106px;height:18px;border:1px solid #638ec6;border-left-width:1px;background:linear-gradient(90deg,#638ec6,#ffffff);box-sizing:content-box"></div><div style="position:absolute;left:37.60px;top:720.40px;font:normal 16px/16px 'Liberation Sans', sans-serif;color:#000;white-space:nowrap;letter-spacing:0.030px;">2024-013</div><div style="position:absolute;left:187.31px;top:720.40px;font:normal 16px/16px 'Liberation Sans', sans-serif;color:#000;white-space:nowrap;letter-spacing:0.611px;transform:translateX(-50%);">6/3/2024</div><div style="position:absolute;left:241.70px;top:720.40px;font:normal 16px/16px 'Liberation Sans', sans-serif;color:#000;white-space:nowrap;letter-spacing:-0.177px;">Radomanski</div><div style="position:absolute;left:357.60px;top:720.40px;font:normal 16px/16px 'Liberation Sans', sans-serif;color:#000;white-space:nowrap;letter-spacing:-0.046px;">Electronics</div><div style="position:absolute;left:480.70px;top:720.40px;font:normal 16px/16px 'Liberation Sans', sans-serif;color:#000;white-space:nowrap;letter-spacing:0.026px;">1005</div><div style="position:absolute;left:600.50px;top:720.40px;font:normal 16px/16px 'Liberation Sans', sans-serif;color:#000;white-space:nowrap;letter-spacing:-0.475px;">Sony</div><div style="position:absolute;left:720.30px;top:720.40px;font:normal 16px/16px 'Liberation Sans', sans-serif;color:#000;white-space:nowrap;letter-spacing:0.019px;">Store Credit</div><div style="position:absolute;left:909.70px;top:720.40px;font:normal 16px/16px 'Liberation Sans', sans-serif;color:#000;white-space:nowrap;letter-spacing:0.375px;">Promotion</div><div style="position:absolute;left:1097.51px;top:720.40px;font:normal 16px/16px 'Liberation Sans', sans-serif;color:#000;white-space:nowrap;letter-spacing:0.026px;transform:translateX(-50%);">2</div><div style="position:absolute;left:1273.42px;top:720.40px;font:normal 16px/16px 'Liberation Sans', sans-serif;color:#000;white-space:nowrap;letter-spacing:0.020px;transform:translateX(-100%);">499.99</div><div style="position:absolute;left:1385.22px;top:720.40px;font:normal 16px/16px 'Liberation Sans', sans-serif;color:#000;white-space:nowrap;letter-spacing:0.020px;transform:translateX(-100%);">100.00</div><div style="position:absolute;left:1465.32px;top:720.40px;font:normal 16px/16px 'Liberation Sans', sans-serif;color:#9c0006;white-space:nowrap;letter-spacing:0.020px;transform:translateX(-100%);">899.98</div><div style="position:absolute;left:1284px;top:740px;width:1px;height:20px;background:#638ec6"></div><div style="position:absolute;left:37.60px;top:744.40px;font:normal 16px/16px 'Liberation Sans', sans-serif;color:#000;white-space:nowrap;letter-spacing:0.030px;">2024-014</div><div style="position:absolute;left:187.31px;top:744.40px;font:normal 16px/16px 'Liberation Sans', sans-serif;color:#000;white-space:nowrap;letter-spacing:0.611px;transform:translateX(-50%);">6/3/2024</div><div style="position:absolute;left:241.70px;top:744.40px;font:normal 16px/16px 'Liberation Sans', sans-serif;color:#000;white-space:nowrap;letter-spacing:-0.594px;">Shah</div><div style="position:absolute;left:357.60px;top:744.40px;font:normal 16px/16px 'Liberation Sans', sans-serif;color:#000;white-space:nowrap;letter-spacing:-0.056px;">Action Figures</div><div style="position:absolute;left:480.70px;top:744.40px;font:normal 16px/16px 'Liberation Sans', sans-serif;color:#000;white-space:nowrap;letter-spacing:0.026px;">1002</div><div style="position:absolute;left:600.50px;top:744.40px;font:normal 16px/16px 'Liberation Sans', sans-serif;color:#000;white-space:nowrap;letter-spacing:-0.125px;">Playmates</div><div style="position:absolute;left:720.30px;top:744.40px;font:normal 16px/16px 'Liberation Sans', sans-serif;color:#000;white-space:nowrap;letter-spacing:-0.371px;">Card</div><div style="position:absolute;left:909.70px;top:744.40px;font:normal 16px/16px 'Liberation Sans', sans-serif;color:#000;white-space:nowrap;letter-spacing:0.375px;">Promotion</div><div style="position:absolute;left:1097.51px;top:744.40px;font:normal 16px/16px 'Liberation Sans', sans-serif;color:#000;white-space:nowrap;letter-spacing:0.026px;transform:translateX(-50%);">1</div><div style="position:absolute;left:1273.42px;top:744.40px;font:normal 16px/16px 'Liberation Sans', sans-serif;color:#000;white-space:nowrap;letter-spacing:0.019px;transform:translateX(-100%);">16.25</div><div style="position:absolute;left:1385.22px;top:744.40px;font:normal 16px/16px 'Liberation Sans', sans-serif;color:#000;white-space:nowrap;letter-spacing:0.017px;transform:translateX(-100%);">1.63</div><div style="position:absolute;left:1465.32px;top:744.40px;font:normal 16px/16px 'Liberation Sans', sans-serif;color:#000;white-space:nowrap;letter-spacing:0.019px;transform:translateX(-100%);">14.63</div><div style="position:absolute;left:1284px;top:764px;width:6px;height:18px;border:1px solid #638ec6;border-left-width:1px;background:linear-gradient(90deg,#638ec6,#ffffff);box-sizing:content-box"></div><div style="position:absolute;left:37.60px;top:768.40px;font:normal 16px/16px 'Liberation Sans', sans-serif;color:#000;white-space:nowrap;letter-spacing:0.030px;">2024-015</div><div style="position:absolute;left:187.31px;top:768.40px;font:normal 16px/16px 'Liberation Sans', sans-serif;color:#000;white-space:nowrap;letter-spacing:0.611px;transform:translateX(-50%);">6/3/2024</div><div style="position:absolute;left:241.70px;top:768.40px;font:normal 16px/16px 'Liberation Sans', sans-serif;color:#000;white-space:nowrap;letter-spacing:0.158px;">McGowan</div><div style="position:absolute;left:357.60px;top:768.40px;font:normal 16px/16px 'Liberation Sans', sans-serif;color:#000;white-space:nowrap;letter-spacing:-0.256px;">Board Games</div><div style="position:absolute;left:480.70px;top:768.40px;font:normal 16px/16px 'Liberation Sans', sans-serif;color:#000;white-space:nowrap;letter-spacing:0.026px;">1007</div><div style="position:absolute;left:600.50px;top:768.40px;font:normal 16px/16px 'Liberation Sans', sans-serif;color:#000;white-space:nowrap;letter-spacing:-0.107px;">Hasbro</div><div style="position:absolute;left:720.30px;top:768.40px;font:normal 16px/16px 'Liberation Sans', sans-serif;color:#000;white-space:nowrap;letter-spacing:0.019px;">Store Credit</div><div style="position:absolute;left:909.70px;top:768.40px;font:normal 16px/16px 'Liberation Sans', sans-serif;color:#000;white-space:nowrap;letter-spacing:-0.029px;">Standard</div><div style="position:absolute;left:1097.51px;top:768.40px;font:normal 16px/16px 'Liberation Sans', sans-serif;color:#000;white-space:nowrap;letter-spacing:0.026px;transform:translateX(-50%);">6</div><div style="position:absolute;left:1273.42px;top:768.40px;font:normal 16px/16px 'Liberation Sans', sans-serif;color:#000;white-space:nowrap;letter-spacing:0.019px;transform:translateX(-100%);">12.99</div><div style="position:absolute;left:1385.22px;top:768.40px;font:normal 16px/16px 'Liberation Sans', sans-serif;color:#000;white-space:nowrap;letter-spacing:0.017px;transform:translateX(-100%);">7.79</div><div style="position:absolute;left:1465.32px;top:768.40px;font:normal 16px/16px 'Liberation Sans', sans-serif;color:#000;white-space:nowrap;letter-spacing:0.019px;transform:translateX(-100%);">70.15</div><div style="position:absolute;left:238px;top:787px;width:115px;height:23px;background:#c6efce;"></div><div style="position:absolute;left:1284px;top:788px;width:2px;height:18px;border:1px solid #638ec6;border-left-width:1px;background:linear-gradient(90deg,#638ec6,#ffffff);box-sizing:content-box"></div><div style="position:absolute;left:37.60px;top:792.40px;font:normal 16px/16px 'Liberation Sans', sans-serif;color:#000;white-space:nowrap;letter-spacing:0.030px;">2024-016</div><div style="position:absolute;left:187.31px;top:792.40px;font:normal 16px/16px 'Liberation Sans', sans-serif;color:#000;white-space:nowrap;letter-spacing:0.611px;transform:translateX(-50%);">6/4/2024</div><div style="position:absolute;left:241.70px;top:792.40px;font:normal 16px/16px 'Liberation Sans', sans-serif;color:#006100;white-space:nowrap;letter-spacing:-0.159px;">Rodriguez</div><div style="position:absolute;left:357.60px;top:792.40px;font:normal 16px/16px 'Liberation Sans', sans-serif;color:#000;white-space:nowrap;letter-spacing:-0.056px;">Action Figures</div><div style="position:absolute;left:480.70px;top:792.40px;font:normal 16px/16px 'Liberation Sans', sans-serif;color:#000;white-space:nowrap;letter-spacing:0.026px;">1001</div><div style="position:absolute;left:600.50px;top:792.40px;font:normal 16px/16px 'Liberation Sans', sans-serif;color:#000;white-space:nowrap;letter-spacing:-0.125px;">Playmates</div><div style="position:absolute;left:720.30px;top:792.40px;font:normal 16px/16px 'Liberation Sans', sans-serif;color:#000;white-space:nowrap;letter-spacing:-0.854px;">Cash</div><div style="position:absolute;left:909.70px;top:792.40px;font:normal 16px/16px 'Liberation Sans', sans-serif;color:#000;white-space:nowrap;letter-spacing:0.375px;">Promotion</div><div style="position:absolute;left:1097.51px;top:792.40px;font:normal 16px/16px 'Liberation Sans', sans-serif;color:#000;white-space:nowrap;letter-spacing:0.026px;transform:translateX(-50%);">2</div><div style="position:absolute;left:1273.42px;top:792.40px;font:normal 16px/16px 'Liberation Sans', sans-serif;color:#000;white-space:nowrap;letter-spacing:0.019px;transform:translateX(-100%);">16.25</div><div style="position:absolute;left:1385.22px;top:792.40px;font:normal 16px/16px 'Liberation Sans', sans-serif;color:#000;white-space:nowrap;letter-spacing:0.017px;transform:translateX(-100%);">3.25</div><div style="position:absolute;left:1465.32px;top:792.40px;font:normal 16px/16px 'Liberation Sans', sans-serif;color:#000;white-space:nowrap;letter-spacing:0.019px;transform:translateX(-100%);">29.25</div><div style="position:absolute;left:1284px;top:812px;width:7px;height:18px;border:1px solid #638ec6;border-left-width:1px;background:linear-gradient(90deg,#638ec6,#ffffff);box-sizing:content-box"></div><div style="position:absolute;left:37.60px;top:816.40px;font:normal 16px/16px 'Liberation Sans', sans-serif;color:#000;white-space:nowrap;letter-spacing:0.030px;">2024-017</div><div style="position:absolute;left:187.31px;top:816.40px;font:normal 16px/16px 'Liberation Sans', sans-serif;color:#000;white-space:nowrap;letter-spacing:0.611px;transform:translateX(-50%);">6/4/2024</div><div style="position:absolute;left:241.70px;top:816.40px;font:normal 16px/16px 'Liberation Sans', sans-serif;color:#000;white-space:nowrap;letter-spacing:0.158px;">McGowan</div><div style="position:absolute;left:357.60px;top:816.40px;font:normal 16px/16px 'Liberation Sans', sans-serif;color:#000;white-space:nowrap;letter-spacing:-0.003px;">Collectibles</div><div style="position:absolute;left:480.70px;top:816.40px;font:normal 16px/16px 'Liberation Sans', sans-serif;color:#000;white-space:nowrap;letter-spacing:0.026px;">1014</div><div style="position:absolute;left:600.50px;top:816.40px;font:normal 16px/16px 'Liberation Sans', sans-serif;color:#000;white-space:nowrap;letter-spacing:0.750px;">Mattel</div><div style="position:absolute;left:720.30px;top:816.40px;font:normal 16px/16px 'Liberation Sans', sans-serif;color:#000;white-space:nowrap;letter-spacing:0.019px;">Store Credit</div><div style="position:absolute;left:909.70px;top:816.40px;font:normal 16px/16px 'Liberation Sans', sans-serif;color:#000;white-space:nowrap;letter-spacing:-0.029px;">Standard</div><div style="position:absolute;left:1097.51px;top:816.40px;font:normal 16px/16px 'Liberation Sans', sans-serif;color:#000;white-space:nowrap;letter-spacing:0.026px;transform:translateX(-50%);">5</div><div style="position:absolute;left:1273.42px;top:816.40px;font:normal 16px/16px 'Liberation Sans', sans-serif;color:#000;white-space:nowrap;letter-spacing:0.019px;transform:translateX(-100%);">16.99</div><div style="position:absolute;left:1385.22px;top:816.40px;font:normal 16px/16px 'Liberation Sans', sans-serif;color:#000;white-space:nowrap;letter-spacing:0.017px;transform:translateX(-100%);">8.50</div><div style="position:absolute;left:1465.32px;top:816.40px;font:normal 16px/16px 'Liberation Sans', sans-serif;color:#000;white-space:nowrap;letter-spacing:0.019px;transform:translateX(-100%);">76.46</div><div style="position:absolute;left:238px;top:835px;width:115px;height:23px;background:#c6efce;"></div><div style="position:absolute;left:1284px;top:836px;width:7px;height:18px;border:1px solid #638ec6;border-left-width:1px;background:linear-gradient(90deg,#638ec6,#ffffff);box-sizing:content-box"></div><div style="position:absolute;left:37.60px;top:840.40px;font:normal 16px/16px 'Liberation Sans', sans-serif;color:#000;white-space:nowrap;letter-spacing:0.030px;">2024-018</div><div style="position:absolute;left:187.31px;top:840.40px;font:normal 16px/16px 'Liberation Sans', sans-serif;color:#000;white-space:nowrap;letter-spacing:0.611px;transform:translateX(-50%);">6/4/2024</div><div style="position:absolute;left:241.70px;top:840.40px;font:normal 16px/16px 'Liberation Sans', sans-serif;color:#006100;white-space:nowrap;letter-spacing:-0.159px;">Rodriguez</div><div style="position:absolute;left:357.60px;top:840.40px;font:normal 16px/16px 'Liberation Sans', sans-serif;color:#000;white-space:nowrap;letter-spacing:-0.056px;">Action Figures</div><div style="position:absolute;left:480.70px;top:840.40px;font:normal 16px/16px 'Liberation Sans', sans-serif;color:#000;white-space:nowrap;letter-spacing:0.026px;">1001</div><div style="position:absolute;left:600.50px;top:840.40px;font:normal 16px/16px 'Liberation Sans', sans-serif;color:#000;white-space:nowrap;letter-spacing:-0.125px;">Playmates</div><div style="position:absolute;left:720.30px;top:840.40px;font:normal 16px/16px 'Liberation Sans', sans-serif;color:#000;white-space:nowrap;letter-spacing:0.019px;">Store Credit</div><div style="position:absolute;left:909.70px;top:840.40px;font:normal 16px/16px 'Liberation Sans', sans-serif;color:#000;white-space:nowrap;letter-spacing:-0.029px;">Standard</div><div style="position:absolute;left:1097.51px;top:840.40px;font:normal 16px/16px 'Liberation Sans', sans-serif;color:#000;white-space:nowrap;letter-spacing:0.026px;transform:translateX(-50%);">5</div><div style="position:absolute;left:1273.42px;top:840.40px;font:normal 16px/16px 'Liberation Sans', sans-serif;color:#000;white-space:nowrap;letter-spacing:0.019px;transform:translateX(-100%);">16.25</div><div style="position:absolute;left:1385.22px;top:840.40px;font:normal 16px/16px 'Liberation Sans', sans-serif;color:#000;white-space:nowrap;letter-spacing:0.017px;transform:translateX(-100%);">8.13</div><div style="position:absolute;left:1465.32px;top:840.40px;font:normal 16px/16px 'Liberation Sans', sans-serif;color:#000;white-space:nowrap;letter-spacing:0.019px;transform:translateX(-100%);">73.13</div><div style="position:absolute;left:1284px;top:860px;width:52px;height:18px;border:1px solid #638ec6;border-left-width:1px;background:linear-gradient(90deg,#638ec6,#ffffff);box-sizing:content-box"></div><div style="position:absolute;left:37.60px;top:864.40px;font:normal 16px/16px 'Liberation Sans', sans-serif;color:#000;white-space:nowrap;letter-spacing:0.030px;">2024-019</div><div style="position:absolute;left:187.31px;top:864.40px;font:normal 16px/16px 'Liberation Sans', sans-serif;color:#000;white-space:nowrap;letter-spacing:0.611px;transform:translateX(-50%);">6/5/2024</div><div style="position:absolute;left:241.70px;top:864.40px;font:normal 16px/16px 'Liberation Sans', sans-serif;color:#000;white-space:nowrap;letter-spacing:0.158px;">McGowan</div><div style="position:absolute;left:357.60px;top:864.40px;font:normal 16px/16px 'Liberation Sans', sans-serif;color:#000;white-space:nowrap;letter-spacing:-0.046px;">Electronics</div><div style="position:absolute;left:480.70px;top:864.40px;font:normal 16px/16px 'Liberation Sans', sans-serif;color:#000;white-space:nowrap;letter-spacing:0.026px;">1005</div><div style="position:absolute;left:600.50px;top:864.40px;font:normal 16px/16px 'Liberation Sans', sans-serif;color:#000;white-space:nowrap;letter-spacing:-0.475px;">Sony</div><div style="position:absolute;left:720.30px;top:864.40px;font:normal 16px/16px 'Liberation Sans', sans-serif;color:#000;white-space:nowrap;letter-spacing:-0.168px;">Financed</div><div style="position:absolute;left:909.70px;top:864.40px;font:normal 16px/16px 'Liberation Sans', sans-serif;color:#000;white-space:nowrap;letter-spacing:0.375px;">Promotion</div><div style="position:absolute;left:1097.51px;top:864.40px;font:normal 16px/16px 'Liberation Sans', sans-serif;color:#000;white-space:nowrap;letter-spacing:0.026px;transform:translateX(-50%);">1</div><div style="position:absolute;left:1273.42px;top:864.40px;font:normal 16px/16px 'Liberation Sans', sans-serif;color:#000;white-space:nowrap;letter-spacing:0.020px;transform:translateX(-100%);">499.99</div><div style="position:absolute;left:1385.22px;top:864.40px;font:normal 16px/16px 'Liberation Sans', sans-serif;color:#000;white-space:nowrap;letter-spacing:0.019px;transform:translateX(-100%);">50.00</div><div style="position:absolute;left:1465.32px;top:864.40px;font:normal 16px/16px 'Liberation Sans', sans-serif;color:#000;white-space:nowrap;letter-spacing:0.020px;transform:translateX(-100%);">449.99</div><div style="position:absolute;left:1284px;top:884px;width:1px;height:20px;background:#638ec6"></div><div style="position:absolute;left:37.60px;top:888.40px;font:normal 16px/16px 'Liberation Sans', sans-serif;color:#000;white-space:nowrap;letter-spacing:0.030px;">2024-020</div><div style="position:absolute;left:187.31px;top:888.40px;font:normal 16px/16px 'Liberation Sans', sans-serif;color:#000;white-space:nowrap;letter-spacing:0.611px;transform:translateX(-50%);">6/5/2024</div><div style="position:absolute;left:241.70px;top:888.40px;font:normal 16px/16px 'Liberation Sans', sans-serif;color:#000;white-space:nowrap;letter-spacing:0.158px;">McGowan</div><div style="position:absolute;left:357.60px;top:888.40px;font:normal 16px/16px 'Liberation Sans', sans-serif;color:#000;white-space:nowrap;letter-spacing:-0.056px;">Action Figures</div><div style="position:absolute;left:480.70px;top:888.40px;font:normal 16px/16px 'Liberation Sans', sans-serif;color:#000;white-space:nowrap;letter-spacing:0.026px;">1015</div><div style="position:absolute;left:600.50px;top:888.40px;font:normal 16px/16px 'Liberation Sans', sans-serif;color:#000;white-space:nowrap;letter-spacing:0.750px;">Mattel</div><div style="position:absolute;left:720.30px;top:888.40px;font:normal 16px/16px 'Liberation Sans', sans-serif;color:#000;white-space:nowrap;letter-spacing:0.019px;">Store Credit</div><div style="position:absolute;left:909.70px;top:888.40px;font:normal 16px/16px 'Liberation Sans', sans-serif;color:#000;white-space:nowrap;letter-spacing:-0.029px;">Standard</div><div style="position:absolute;left:1097.51px;top:888.40px;font:normal 16px/16px 'Liberation Sans', sans-serif;color:#000;white-space:nowrap;letter-spacing:0.026px;transform:translateX(-50%);">1</div><div style="position:absolute;left:1273.42px;top:888.40px;font:normal 16px/16px 'Liberation Sans', sans-serif;color:#000;white-space:nowrap;letter-spacing:0.019px;transform:translateX(-100%);">13.49</div><div style="position:absolute;left:1385.22px;top:888.40px;font:normal 16px/16px 'Liberation Sans', sans-serif;color:#000;white-space:nowrap;letter-spacing:0.017px;transform:translateX(-100%);">1.35</div><div style="position:absolute;left:1465.32px;top:888.40px;font:normal 16px/16px 'Liberation Sans', sans-serif;color:#000;white-space:nowrap;letter-spacing:0.019px;transform:translateX(-100%);">12.14</div><div style="position:absolute;left:1284px;top:908px;width:1px;height:20px;background:#638ec6"></div><div style="position:absolute;left:37.60px;top:912.40px;font:normal 16px/16px 'Liberation Sans', sans-serif;color:#000;white-space:nowrap;letter-spacing:0.030px;">2024-021</div><div style="position:absolute;left:187.31px;top:912.40px;font:normal 16px/16px 'Liberation Sans', sans-serif;color:#000;white-space:nowrap;letter-spacing:0.611px;transform:translateX(-50%);">6/5/2024</div><div style="position:absolute;left:241.70px;top:912.40px;font:normal 16px/16px 'Liberation Sans', sans-serif;color:#000;white-space:nowrap;letter-spacing:0.158px;">McGowan</div><div style="position:absolute;left:357.60px;top:912.40px;font:normal 16px/16px 'Liberation Sans', sans-serif;color:#000;white-space:nowrap;letter-spacing:-0.056px;">Action Figures</div><div style="position:absolute;left:480.70px;top:912.40px;font:normal 16px/16px 'Liberation Sans', sans-serif;color:#000;white-space:nowrap;letter-spacing:0.026px;">1003</div><div style="position:absolute;left:600.50px;top:912.40px;font:normal 16px/16px 'Liberation Sans', sans-serif;color:#000;white-space:nowrap;letter-spacing:-0.125px;">Playmates</div><div style="position:absolute;left:720.30px;top:912.40px;font:normal 16px/16px 'Liberation Sans', sans-serif;color:#000;white-space:nowrap;letter-spacing:-0.854px;">Cash</div><div style="position:absolute;left:909.70px;top:912.40px;font:normal 16px/16px 'Liberation Sans', sans-serif;color:#000;white-space:nowrap;letter-spacing:0.375px;">Promotion</div><div style="position:absolute;left:1097.51px;top:912.40px;font:normal 16px/16px 'Liberation Sans', sans-serif;color:#000;white-space:nowrap;letter-spacing:0.026px;transform:translateX(-50%);">1</div><div style="position:absolute;left:1273.42px;top:912.40px;font:normal 16px/16px 'Liberation Sans', sans-serif;color:#000;white-space:nowrap;letter-spacing:0.019px;transform:translateX(-100%);">16.25</div><div style="position:absolute;left:1385.22px;top:912.40px;font:normal 16px/16px 'Liberation Sans', sans-serif;color:#000;white-space:nowrap;letter-spacing:0.017px;transform:translateX(-100%);">1.63</div><div style="position:absolute;left:1465.32px;top:912.40px;font:normal 16px/16px 'Liberation Sans', sans-serif;color:#000;white-space:nowrap;letter-spacing:0.019px;transform:translateX(-100%);">14.63</div><div style="position:absolute;left:0px;top:925px;width:1894px;height:1px;background:#b4b4b4;"></div><div style="position:absolute;left:0px;top:234px;width:1894px;height:1px;background:rgba(255,255,255,0.42);"></div><div style="position:absolute;left:1894px;top:211px;width:24px;height:715px;background:#262626;"></div><div style="position:absolute;left:1898px;top:231px;width:19px;height:676px;background:#0c0c0c;"></div><div style="position:absolute;left:1898px;top:213px;width:17px;height:16px;background:#333333;border:1px solid #5a5a5a;"></div><svg style="position:absolute;left:1898px;top:213px" width="19" height="18"><polygon points="4.5,11.5 14,11.5 9.25,6" fill="#ffffff"/></svg><div style="position:absolute;left:1898px;top:231px;width:17px;height:170px;background:#3a3a3a;border:1px solid #7a7a7a;"></div><div style="position:absolute;left:1898px;top:907px;width:17px;height:17px;background:#333333;border:1px solid #5a5a5a;"></div><svg style="position:absolute;left:1898px;top:907px" width="19" height="19"><polygon points="4.5,8 14,8 9.25,13.5" fill="#ffffff"/></svg></body></html>
